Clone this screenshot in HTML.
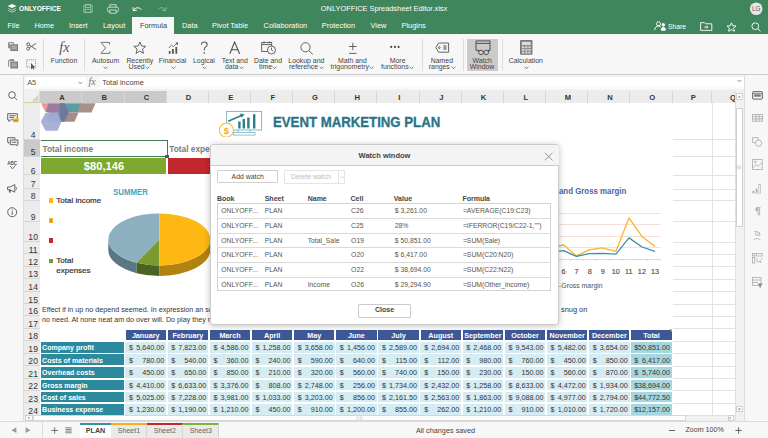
<!DOCTYPE html><html><head><meta charset="utf-8"><style>
html,body{margin:0;padding:0;width:768px;height:438px;overflow:hidden;background:#fff;font-family:"Liberation Sans", sans-serif;}
div{box-sizing:border-box;}
</style></head><body><div style="position:absolute;left:0px;top:0px;width:768px;height:34px;background:#40865c"></div>
<svg style="position:absolute;left:7px;top:3px;" width="10" height="11" viewBox="0 0 10 11"><path d="M5.1 0.9 L9.5 3 L5.1 5.1 L0.7 3 Z" fill="#fff"/>
<g fill="none" stroke="#fff" stroke-width="0.8" stroke-opacity="0.75"><path d="M1.3 5.4 L5.1 7.2 L8.9 5.4"/><path d="M1.3 7.4 L5.1 9.2 L8.9 7.4"/></g></svg>
<div style="position:absolute;left:19px;top:5.5px;font-size:6.6px;line-height:6.6px;color:#ffffff;font-weight:bold;white-space:pre;">ONLYOFFICE</div>
<svg style="position:absolute;left:83px;top:4px;" width="10" height="9" viewBox="0 0 10 9"><g fill="none" stroke="#a9cdb5" stroke-width="0.8"><rect x="0.8" y="0.8" width="8.4" height="7.6" rx="0.8"/><rect x="2.6" y="0.8" width="4.8" height="2.6"/><rect x="2.2" y="5.2" width="5.6" height="3.2"/></g></svg>
<svg style="position:absolute;left:107px;top:3.5px;" width="12" height="10" viewBox="0 0 12 10"><g fill="none" stroke="#e8f0ea" stroke-width="0.75"><path d="M2.9 3.2 V0.7 H9.1 V3.2"/><rect x="0.6" y="3.2" width="10.8" height="4.6" rx="1.2"/><rect x="2.9" y="6" width="6.2" height="3.2" fill="#40865c"/></g></svg>
<svg style="position:absolute;left:132px;top:6px;" width="11" height="6" viewBox="0 0 11 6"><g fill="none" stroke="#fff" stroke-width="1"><path d="M1.5 4.5 C3 1.2 7 1 9.5 3.5"/><path d="M0.8 1.2 L1.5 4.8 L4.8 4.2"/></g></svg>
<svg style="position:absolute;left:158px;top:6px;" width="9" height="6" viewBox="0 0 9 6"><g fill="none" stroke="#8fbba0" stroke-width="1"><path d="M7.5 4.5 C6 1.2 2.5 1 0.5 3"/><path d="M8.2 1.2 L7.5 4.8 L4.2 4.2"/></g></svg>
<div style="position:absolute;left:284px;width:200px;text-align:center;top:4.5px;font-size:7.4px;line-height:7.4px;color:#ffffff;font-weight:normal;white-space:pre;">ONLYOFFICE Spreadsheet Editor.xlsx</div>
<div style="position:absolute;left:132px;top:17px;width:42px;height:17px;background:#f7f7f7"></div>
<div style="position:absolute;left:7.6px;top:22px;font-size:7.4px;line-height:7.4px;color:#ffffff;font-weight:normal;white-space:pre;">File</div>
<div style="position:absolute;left:34.4px;top:22px;font-size:7.4px;line-height:7.4px;color:#ffffff;font-weight:normal;white-space:pre;">Home</div>
<div style="position:absolute;left:69px;top:22px;font-size:7.4px;line-height:7.4px;color:#ffffff;font-weight:normal;white-space:pre;">Insert</div>
<div style="position:absolute;left:103px;top:22px;font-size:7.4px;line-height:7.4px;color:#ffffff;font-weight:normal;white-space:pre;">Layout</div>
<div style="position:absolute;left:182px;top:22px;font-size:7.4px;line-height:7.4px;color:#ffffff;font-weight:normal;white-space:pre;">Data</div>
<div style="position:absolute;left:212px;top:22px;font-size:7.4px;line-height:7.4px;color:#ffffff;font-weight:normal;white-space:pre;">Pivot Table</div>
<div style="position:absolute;left:263.6px;top:22px;font-size:7.4px;line-height:7.4px;color:#ffffff;font-weight:normal;white-space:pre;">Collaboration</div>
<div style="position:absolute;left:321.8px;top:22px;font-size:7.4px;line-height:7.4px;color:#ffffff;font-weight:normal;white-space:pre;">Protection</div>
<div style="position:absolute;left:370.5px;top:22px;font-size:7.4px;line-height:7.4px;color:#ffffff;font-weight:normal;white-space:pre;">View</div>
<div style="position:absolute;left:401.5px;top:22px;font-size:7.4px;line-height:7.4px;color:#ffffff;font-weight:normal;white-space:pre;">Plugins</div>
<div style="position:absolute;left:140px;top:22px;font-size:7.4px;line-height:7.4px;color:#444;font-weight:normal;white-space:pre;">Formula</div>
<svg style="position:absolute;left:749px;top:2px;" width="14" height="14" viewBox="0 0 14 14"><circle cx="7.2" cy="6.8" r="6.3" fill="#e6e6e6"/><text x="7.2" y="9.2" font-size="6.4" text-anchor="middle" fill="#5a5a5a" font-family="Liberation Sans">LG</text></svg>
<svg style="position:absolute;left:654px;top:21px;" width="13" height="10" viewBox="0 0 13 10"><g fill="none" stroke="#fff" stroke-width="0.9"><circle cx="4.5" cy="2.8" r="2"/><path d="M0.7 9.2 C0.7 6.2 2.5 5.2 4.5 5.2 C5.5 5.2 6.3 5.5 7 6"/><circle cx="9.3" cy="3.8" r="1.3" fill="#fff"/><path d="M7.3 9.2 C7.3 7.3 8 6.3 9.3 6.3 C10.6 6.3 11.3 7.3 11.3 9.2 Z" fill="#fff"/></g></svg>
<div style="position:absolute;left:668px;top:23.7px;font-size:6.8px;line-height:6.8px;color:#ffffff;font-weight:normal;white-space:pre;">Share</div>
<svg style="position:absolute;left:700px;top:22px;" width="13" height="9" viewBox="0 0 13 9"><g fill="none" stroke="#fff" stroke-width="0.9"><path d="M0.6 0.6 H4.6 L5.6 1.8 H11.8 V8.4 H0.6 Z"/><path d="M4.2 5.1 H7.8 M6.4 3.7 L7.8 5.1 L6.4 6.5"/></g></svg>
<svg style="position:absolute;left:726px;top:21.5px;" width="11" height="10" viewBox="0 0 11 10"><path d="M5.5 0.8 L6.8 3.8 L10 4 L7.6 6.1 L8.4 9.3 L5.5 7.6 L2.6 9.3 L3.4 6.1 L1 4 L4.2 3.8 Z" fill="none" stroke="#fff" stroke-width="0.9" stroke-linejoin="round"/></svg>
<svg style="position:absolute;left:750.5px;top:21.5px;" width="11" height="10" viewBox="0 0 11 10"><g fill="none" stroke="#fff" stroke-width="0.9"><circle cx="4.3" cy="4.2" r="3.4"/><path d="M6.8 6.7 L9.6 9.4"/></g></svg>
<div style="position:absolute;left:0px;top:34px;width:768px;height:41px;background:#f7f7f7;border-bottom:1px solid #cbcbcb"></div>
<div style="position:absolute;left:467px;top:39.2px;width:30.5px;height:31.8px;background:#cbcbcb"></div>
<svg style="position:absolute;left:7.5px;top:42px;" width="11" height="10" viewBox="0 0 11 10"><g fill="none" stroke="#6a6a6a" stroke-width="0.8"><path d="M0.6 6.2 V0.6 H5.4 V2.4"/><path d="M1.6 6.4 V1.6"/><rect x="2.8" y="2.8" width="6.8" height="5.8" fill="#9a9a9a"/></g><g stroke="#c8c8c8" stroke-width="0.5"><path d="M4 4.6 H8.4 M4 6.2 H8.4"/></g></svg>
<svg style="position:absolute;left:7.5px;top:59px;" width="11" height="10" viewBox="0 0 11 10"><g fill="none" stroke="#6a6a6a" stroke-width="0.8"><path d="M0.6 7.6 V1.6 H6.2 M1.8 0.6 H5.6 V1.6"/><rect x="2.8" y="3" width="6.8" height="6" fill="#9a9a9a"/></g><g stroke="#c8c8c8" stroke-width="0.5"><path d="M4 5 H8.4 M4 6.6 H8.4"/></g></svg>
<svg style="position:absolute;left:25.5px;top:42px;" width="11" height="9" viewBox="0 0 11 9"><g fill="none" stroke="#555" stroke-width="0.9"><circle cx="2.2" cy="2.3" r="1.5"/><circle cx="2.2" cy="6.6" r="1.5"/><path d="M3.5 3.2 L10.2 7.6 M3.5 5.7 L10.2 1.3"/></g></svg>
<svg style="position:absolute;left:25.5px;top:58.5px;" width="11" height="11" viewBox="0 0 11 11"><g fill="none" stroke="#666" stroke-width="0.8" stroke-dasharray="1,1"><rect x="0.8" y="0.8" width="8.8" height="7.4"/></g><path d="M5 4 L5 10.4 L6.4 9 L7.6 10.8 L8.4 10.3 L7.3 8.6 L9.2 8.4 Z" fill="#555"/></svg>
<div style="position:absolute;left:43.2px;top:39px;width:0.9px;height:31.5px;background:#dcdcdc"></div>
<div style="position:absolute;left:59.3px;top:39.8px;font-family:'Liberation Serif',serif;font-style:italic;font-size:14.2px;line-height:14px;color:#555">fx</div>
<div style="position:absolute;left:50.8px;top:57.58925px;font-size:6.9px;line-height:6.9px;color:#444;font-weight:normal;white-space:pre;">Function</div>
<div style="position:absolute;left:84.19999999999999px;top:39px;width:0.9px;height:31.5px;background:#dcdcdc"></div>
<svg style="position:absolute;left:100px;top:41px;" width="11" height="13.5" viewBox="0 0 11 13.5"><path d="M9.6 3.4 L9.6 1.4 H1 L5.6 7 L1 12.4 H9.8 L9.8 10.4" fill="none" stroke="#666" stroke-width="0.9" stroke-linejoin="miter"/></svg>
<div style="position:absolute;left:92px;top:57.58925px;font-size:6.9px;line-height:6.9px;color:#444;font-weight:normal;white-space:pre;">Autosum</div>
<svg style="position:absolute;left:103.0px;top:65.7px;" width="5" height="3.5" viewBox="0 0 5 3.5"><path d="M0.6 0.8 L2.5 2.6 L4.4 0.8" fill="none" stroke="#555" stroke-width="0.8"/></svg>
<svg style="position:absolute;left:132.5px;top:41px;" width="14" height="13.5" viewBox="0 0 14 13.5"><path d="M6.8 1 L8.5 5 L12.8 5.3 L9.5 8.1 L10.5 12.4 L6.8 10.1 L3.1 12.4 L4.1 8.1 L0.8 5.3 L5.1 5 Z" fill="none" stroke="#555" stroke-width="0.9" stroke-linejoin="round"/></svg>
<div style="position:absolute;left:126.4px;top:57.58925px;font-size:6.9px;line-height:6.9px;color:#444;font-weight:normal;white-space:pre;">Recently</div>
<div style="position:absolute;left:128.5px;top:64.38925px;font-size:6.9px;line-height:6.9px;color:#444;font-weight:normal;white-space:pre;">Used</div>
<svg style="position:absolute;left:145.1px;top:65.7px;" width="5" height="3.5" viewBox="0 0 5 3.5"><path d="M0.6 0.8 L2.5 2.6 L4.4 0.8" fill="none" stroke="#555" stroke-width="0.8"/></svg>
<svg style="position:absolute;left:167.5px;top:41.5px;" width="11" height="12.5" viewBox="0 0 11 12.5"><g fill="#555"><rect x="0.8" y="9" width="1.8" height="2.8"/><rect x="4" y="7" width="1.8" height="4.8"/><rect x="7.4" y="5" width="1.8" height="6.8"/></g><path d="M0.8 6 L3.6 3.2 L5.4 4.6 L9.2 1" fill="none" stroke="#555" stroke-width="0.8"/><path d="M7.3 0.6 L10 0.6 L10 3.2 Z" fill="#555"/></svg>
<div style="position:absolute;left:158.7px;top:57.58925px;font-size:6.9px;line-height:6.9px;color:#444;font-weight:normal;white-space:pre;">Financial</div>
<svg style="position:absolute;left:171.1px;top:65.7px;" width="5" height="3.5" viewBox="0 0 5 3.5"><path d="M0.6 0.8 L2.5 2.6 L4.4 0.8" fill="none" stroke="#555" stroke-width="0.8"/></svg>
<svg style="position:absolute;left:199.5px;top:41px;" width="9" height="14" viewBox="0 0 9 14"><path d="M1.3 3.8 C1.3 1.9 2.6 1 4.2 1 C5.9 1 7.2 2.1 7.2 3.6 C7.2 5.3 5.9 5.8 4.9 6.7 C4.3 7.3 4.2 7.9 4.2 9.4" fill="none" stroke="#5a5a5a" stroke-width="1.05"/><rect x="3.5" y="11.3" width="1.45" height="1.45" fill="#5a5a5a"/></svg>
<div style="position:absolute;left:193px;top:57.58925px;font-size:6.9px;line-height:6.9px;color:#444;font-weight:normal;white-space:pre;">Logical</div>
<svg style="position:absolute;left:201.5px;top:65.7px;" width="5" height="3.5" viewBox="0 0 5 3.5"><path d="M0.6 0.8 L2.5 2.6 L4.4 0.8" fill="none" stroke="#555" stroke-width="0.8"/></svg>
<svg style="position:absolute;left:229px;top:41px;" width="12" height="14" viewBox="0 0 12 14"><path d="M0.8 12.8 L5.6 1 L10.6 12.8 M2.4 8.8 H9" fill="none" stroke="#4a4a4a" stroke-width="1.05"/></svg>
<div style="position:absolute;left:221.7px;top:57.58925px;font-size:6.9px;line-height:6.9px;color:#444;font-weight:normal;white-space:pre;">Text and</div>
<div style="position:absolute;left:225px;top:64.38925px;font-size:6.9px;line-height:6.9px;color:#444;font-weight:normal;white-space:pre;">data</div>
<svg style="position:absolute;left:238.7px;top:65.7px;" width="5" height="3.5" viewBox="0 0 5 3.5"><path d="M0.6 0.8 L2.5 2.6 L4.4 0.8" fill="none" stroke="#555" stroke-width="0.8"/></svg>
<svg style="position:absolute;left:260.5px;top:41px;" width="15.5" height="14" viewBox="0 0 15.5 14"><g fill="none" stroke="#555" stroke-width="0.9"><rect x="0.7" y="1.6" width="10" height="8.8"/><path d="M0.7 3.6 H10.7"/><path d="M3 0.4 V2.4 M8.3 0.4 V2.4"/><circle cx="10.5" cy="9" r="4" fill="#f7f7f7"/><path d="M10.5 6.6 V9 L12.2 10.3"/></g></svg>
<div style="position:absolute;left:254px;top:57.58925px;font-size:6.9px;line-height:6.9px;color:#444;font-weight:normal;white-space:pre;">Date and</div>
<div style="position:absolute;left:259px;top:64.38925px;font-size:6.9px;line-height:6.9px;color:#444;font-weight:normal;white-space:pre;">time</div>
<svg style="position:absolute;left:272.1px;top:65.7px;" width="5" height="3.5" viewBox="0 0 5 3.5"><path d="M0.6 0.8 L2.5 2.6 L4.4 0.8" fill="none" stroke="#555" stroke-width="0.8"/></svg>
<svg style="position:absolute;left:299.5px;top:41.5px;" width="14" height="13" viewBox="0 0 14 13"><g fill="none" stroke="#555" stroke-width="0.9"><circle cx="5.5" cy="5.3" r="4.6"/><path d="M8.8 8.6 L12.8 12.4"/></g></svg>
<div style="position:absolute;left:288.3px;top:57.58925px;font-size:6.9px;line-height:6.9px;color:#444;font-weight:normal;white-space:pre;">Lookup and</div>
<div style="position:absolute;left:289px;top:64.38925px;font-size:6.9px;line-height:6.9px;color:#444;font-weight:normal;white-space:pre;">reference</div>
<svg style="position:absolute;left:318.5px;top:65.7px;" width="5" height="3.5" viewBox="0 0 5 3.5"><path d="M0.6 0.8 L2.5 2.6 L4.4 0.8" fill="none" stroke="#555" stroke-width="0.8"/></svg>
<svg style="position:absolute;left:347.5px;top:41.5px;" width="10" height="13" viewBox="0 0 10 13"><g stroke="#555" stroke-width="0.9"><path d="M4.8 0.8 V8.2 M1 4.5 H8.6 M1 11.4 H8.6"/></g></svg>
<div style="position:absolute;left:338px;top:57.58925px;font-size:6.9px;line-height:6.9px;color:#444;font-weight:normal;white-space:pre;">Math and</div>
<div style="position:absolute;left:330.6px;top:64.38925px;font-size:6.9px;line-height:6.9px;color:#444;font-weight:normal;white-space:pre;">trigonometry</div>
<svg style="position:absolute;left:369.1px;top:65.7px;" width="5" height="3.5" viewBox="0 0 5 3.5"><path d="M0.6 0.8 L2.5 2.6 L4.4 0.8" fill="none" stroke="#555" stroke-width="0.8"/></svg>
<svg style="position:absolute;left:389px;top:45px;" width="12" height="3" viewBox="0 0 12 3"><g fill="#444"><circle cx="2.2" cy="1.9" r="1.05"/><circle cx="5.9" cy="1.9" r="1.05"/><circle cx="9.6" cy="1.9" r="1.05"/></g></svg>
<div style="position:absolute;left:389.8px;top:57.58925px;font-size:6.9px;line-height:6.9px;color:#444;font-weight:normal;white-space:pre;">More</div>
<div style="position:absolute;left:381px;top:64.38925px;font-size:6.9px;line-height:6.9px;color:#444;font-weight:normal;white-space:pre;">functions</div>
<svg style="position:absolute;left:409.0px;top:65.7px;" width="5" height="3.5" viewBox="0 0 5 3.5"><path d="M0.6 0.8 L2.5 2.6 L4.4 0.8" fill="none" stroke="#555" stroke-width="0.8"/></svg>
<div style="position:absolute;left:421.5px;top:39px;width:0.9px;height:31.5px;background:#dcdcdc"></div>
<svg style="position:absolute;left:435px;top:42px;" width="15" height="11.5" viewBox="0 0 15 11.5"><g fill="none" stroke="#555" stroke-width="0.9"><path d="M3.6 1 H13.6 V10.2 H3.6 L0.8 5.6 Z"/><circle cx="4.3" cy="5.6" r="0.9"/></g><g fill="#999"><rect x="8.4" y="3.2" width="3.2" height="4.8"/></g></svg>
<div style="position:absolute;left:430.8px;top:57.58925px;font-size:6.9px;line-height:6.9px;color:#444;font-weight:normal;white-space:pre;">Named</div>
<div style="position:absolute;left:428.75px;top:64.38925px;font-size:6.9px;line-height:6.9px;color:#444;font-weight:normal;white-space:pre;">ranges</div>
<svg style="position:absolute;left:450.5px;top:65.7px;" width="5" height="3.5" viewBox="0 0 5 3.5"><path d="M0.6 0.8 L2.5 2.6 L4.4 0.8" fill="none" stroke="#555" stroke-width="0.8"/></svg>
<div style="position:absolute;left:462.6px;top:39px;width:0.9px;height:31.5px;background:#dcdcdc"></div>
<svg style="position:absolute;left:474.5px;top:40px;" width="16" height="17" viewBox="0 0 16 17"><g fill="none" stroke="#444" stroke-width="0.9"><path d="M3.2 10.4 H1 V0.9 H15 V10.4 H13.2"/><path d="M1 3.4 H15"/><circle cx="6" cy="12.4" r="2.3"/><circle cx="11.2" cy="12.4" r="2.3"/><path d="M8.2 12 Q8.6 11.3 9 12 M3.8 12 L3.4 9.8 M13.4 12 L13.8 9.8"/></g></svg>
<div style="position:absolute;left:472.5px;top:57.58925px;font-size:6.9px;line-height:6.9px;color:#444;font-weight:normal;white-space:pre;">Watch</div>
<div style="position:absolute;left:469.8px;top:64.38925px;font-size:6.9px;line-height:6.9px;color:#444;font-weight:normal;white-space:pre;">Window</div>
<div style="position:absolute;left:501.6px;top:39px;width:0.9px;height:31.5px;background:#dcdcdc"></div>
<svg style="position:absolute;left:520px;top:40px;" width="13" height="15" viewBox="0 0 13 15"><rect x="0.6" y="0.6" width="11.4" height="13.6" fill="#8c8c8c" stroke="#666" stroke-width="0.8"/><rect x="2" y="2" width="8.6" height="3" fill="#ddd"/><g fill="#ddd"><rect x="2" y="6.4" width="2.2" height="1.7"/><rect x="5.2" y="6.4" width="2.2" height="1.7"/><rect x="8.4" y="6.4" width="2.2" height="1.7"/><rect x="2" y="9.1" width="2.2" height="1.7"/><rect x="5.2" y="9.1" width="2.2" height="1.7"/><rect x="8.4" y="9.1" width="2.2" height="1.7"/><rect x="2" y="11.8" width="2.2" height="1.6"/><rect x="5.2" y="11.8" width="2.2" height="1.6"/><rect x="8.4" y="11.8" width="2.2" height="1.6"/></g></svg>
<div style="position:absolute;left:508.75px;top:57.58925px;font-size:6.9px;line-height:6.9px;color:#444;font-weight:normal;white-space:pre;">Calculation</div>
<svg style="position:absolute;left:524.0px;top:65.7px;" width="5" height="3.5" viewBox="0 0 5 3.5"><path d="M0.6 0.8 L2.5 2.6 L4.4 0.8" fill="none" stroke="#555" stroke-width="0.8"/></svg>
<div style="position:absolute;left:0px;top:75px;width:24px;height:346.5px;background:#f7f7f7;border-right:1px solid #dcdcdc"></div>
<div style="position:absolute;left:24px;top:75px;width:721px;height:16px;background:#f1f1f1"></div>
<div style="position:absolute;left:25px;top:76.6px;width:60.8px;height:10.8px;background:#fff"></div>
<div style="position:absolute;left:27.2px;top:78.73049999999999px;font-size:7.4px;line-height:7.4px;color:#555;font-weight:normal;white-space:pre;">A5</div>
<svg style="position:absolute;left:77.5px;top:80.5px;" width="5" height="4" viewBox="0 0 5 4"><path d="M0.6 1 L2.4 2.8 L4.2 1" fill="none" stroke="#666" stroke-width="0.8"/></svg>
<div style="position:absolute;left:86.4px;top:76.6px;width:12.6px;height:10.8px;background:#f7f7f7"></div>
<div style="position:absolute;left:88.6px;top:77px;font-family:'Liberation Serif',serif;font-style:italic;font-size:10px;line-height:10px;color:#777">fx</div>
<div style="position:absolute;left:99.6px;top:76.6px;width:645px;height:10.8px;background:#fff"></div>
<div style="position:absolute;left:102.3px;top:78.73049999999999px;font-size:7.4px;line-height:7.4px;color:#444;font-weight:normal;white-space:pre;">Total income</div>
<svg style="position:absolute;left:736.5px;top:79px;" width="5" height="4" viewBox="0 0 5 4"><path d="M0.6 1 L2.4 2.8 L4.2 1" fill="none" stroke="#666" stroke-width="0.8"/></svg>
<div style="position:absolute;left:24px;top:87.4px;width:721px;height:1.5px;background:#fafafa"></div>
<div style="position:absolute;left:24px;top:91.2px;width:721px;height:11.5px;background:#ececec"></div>
<div style="position:absolute;left:24px;top:91.2px;width:16.3px;height:11.5px;background:#f1f1f1;border-right:1px solid #d8d8d8"></div>
<svg style="position:absolute;left:31px;top:94px;" width="8" height="8" viewBox="0 0 8 8"><path d="M7.4 0.6 L7.4 7.4 L0.6 7.4 Z" fill="#d2d2d2"/></svg>
<div style="position:absolute;left:40.3px;top:91.2px;width:42.14999999999999px;height:11.5px;background:#cacaca;border-right:1px solid #d6d6d6"></div>
<div style="position:absolute;left:-37.925000000000004px;width:200px;text-align:center;top:93.707px;font-size:7.6px;line-height:7.6px;color:#363636;font-weight:bold;white-space:pre;">A</div>
<div style="position:absolute;left:82.44999999999999px;top:91.2px;width:42.150000000000006px;height:11.5px;background:#cacaca;border-right:1px solid #d6d6d6"></div>
<div style="position:absolute;left:4.224999999999994px;width:200px;text-align:center;top:93.707px;font-size:7.6px;line-height:7.6px;color:#363636;font-weight:bold;white-space:pre;">B</div>
<div style="position:absolute;left:124.6px;top:91.2px;width:42.150000000000006px;height:11.5px;background:#cacaca;border-right:1px solid #d6d6d6"></div>
<div style="position:absolute;left:46.375px;width:200px;text-align:center;top:93.707px;font-size:7.6px;line-height:7.6px;color:#363636;font-weight:bold;white-space:pre;">C</div>
<div style="position:absolute;left:166.75px;top:91.2px;width:42.14999999999998px;height:11.5px;background:#ececec;border-right:1px solid #d6d6d6"></div>
<div style="position:absolute;left:88.52499999999998px;width:200px;text-align:center;top:93.707px;font-size:7.6px;line-height:7.6px;color:#363636;font-weight:bold;white-space:pre;">D</div>
<div style="position:absolute;left:208.89999999999998px;top:91.2px;width:42.150000000000034px;height:11.5px;background:#ececec;border-right:1px solid #d6d6d6"></div>
<div style="position:absolute;left:130.67499999999998px;width:200px;text-align:center;top:93.707px;font-size:7.6px;line-height:7.6px;color:#363636;font-weight:bold;white-space:pre;">E</div>
<div style="position:absolute;left:251.05px;top:91.2px;width:42.14999999999998px;height:11.5px;background:#ececec;border-right:1px solid #d6d6d6"></div>
<div style="position:absolute;left:172.825px;width:200px;text-align:center;top:93.707px;font-size:7.6px;line-height:7.6px;color:#363636;font-weight:bold;white-space:pre;">F</div>
<div style="position:absolute;left:293.2px;top:91.2px;width:42.150000000000034px;height:11.5px;background:#ececec;border-right:1px solid #d6d6d6"></div>
<div style="position:absolute;left:214.97499999999997px;width:200px;text-align:center;top:93.707px;font-size:7.6px;line-height:7.6px;color:#363636;font-weight:bold;white-space:pre;">G</div>
<div style="position:absolute;left:335.35px;top:91.2px;width:42.14999999999998px;height:11.5px;background:#ececec;border-right:1px solid #d6d6d6"></div>
<div style="position:absolute;left:257.125px;width:200px;text-align:center;top:93.707px;font-size:7.6px;line-height:7.6px;color:#363636;font-weight:bold;white-space:pre;">H</div>
<div style="position:absolute;left:377.5px;top:91.2px;width:42.14999999999998px;height:11.5px;background:#ececec;border-right:1px solid #d6d6d6"></div>
<div style="position:absolute;left:299.275px;width:200px;text-align:center;top:93.707px;font-size:7.6px;line-height:7.6px;color:#363636;font-weight:bold;white-space:pre;">I</div>
<div style="position:absolute;left:419.65px;top:91.2px;width:42.150000000000034px;height:11.5px;background:#ececec;border-right:1px solid #d6d6d6"></div>
<div style="position:absolute;left:341.425px;width:200px;text-align:center;top:93.707px;font-size:7.6px;line-height:7.6px;color:#363636;font-weight:bold;white-space:pre;">J</div>
<div style="position:absolute;left:461.8px;top:91.2px;width:42.14999999999998px;height:11.5px;background:#ececec;border-right:1px solid #d6d6d6"></div>
<div style="position:absolute;left:383.575px;width:200px;text-align:center;top:93.707px;font-size:7.6px;line-height:7.6px;color:#363636;font-weight:bold;white-space:pre;">K</div>
<div style="position:absolute;left:503.95px;top:91.2px;width:42.14999999999992px;height:11.5px;background:#ececec;border-right:1px solid #d6d6d6"></div>
<div style="position:absolute;left:425.725px;width:200px;text-align:center;top:93.707px;font-size:7.6px;line-height:7.6px;color:#363636;font-weight:bold;white-space:pre;">L</div>
<div style="position:absolute;left:546.0999999999999px;top:91.2px;width:42.14999999999998px;height:11.5px;background:#ececec;border-right:1px solid #d6d6d6"></div>
<div style="position:absolute;left:467.875px;width:200px;text-align:center;top:93.707px;font-size:7.6px;line-height:7.6px;color:#363636;font-weight:bold;white-space:pre;">M</div>
<div style="position:absolute;left:588.2499999999999px;top:91.2px;width:42.15000000000009px;height:11.5px;background:#ececec;border-right:1px solid #d6d6d6"></div>
<div style="position:absolute;left:510.025px;width:200px;text-align:center;top:93.707px;font-size:7.6px;line-height:7.6px;color:#363636;font-weight:bold;white-space:pre;">N</div>
<div style="position:absolute;left:630.4px;top:91.2px;width:42.30000000000007px;height:11.5px;background:#ececec;border-right:1px solid #d6d6d6"></div>
<div style="position:absolute;left:552.25px;width:200px;text-align:center;top:93.707px;font-size:7.6px;line-height:7.6px;color:#363636;font-weight:bold;white-space:pre;">O</div>
<div style="position:absolute;left:672.7px;top:91.2px;width:39.59999999999991px;height:11.5px;background:#ececec;border-right:1px solid #d6d6d6"></div>
<div style="position:absolute;left:593.2px;width:200px;text-align:center;top:93.707px;font-size:7.6px;line-height:7.6px;color:#363636;font-weight:bold;white-space:pre;">P</div>
<div style="position:absolute;left:712.3px;top:91.2px;width:47.700000000000045px;height:11.5px;background:#ececec;border-right:1px solid #d6d6d6"></div>
<div style="position:absolute;left:633px;width:200px;text-align:center;top:93.707px;font-size:7.6px;line-height:7.6px;color:#363636;font-weight:bold;white-space:pre;">Q</div>
<div style="position:absolute;left:40.3px;top:102.7px;width:695px;height:313px;background:#fff"></div>
<div style="position:absolute;left:24px;top:102.7px;width:16.3px;height:313px;background:#ececec"></div>
<div style="position:absolute;left:24px;top:102.7px;width:16.3px;height:37.2px;background:#ececec;border-bottom:1px solid #d6d6d6"></div>
<div style="position:absolute;left:25px;width:16.3px;text-align:center;top:131.15869999999998px;font-size:8.6px;line-height:8.2px;color:#333;font-weight:normal">4</div>
<div style="position:absolute;left:24px;top:139.9px;width:16.3px;height:16.799999999999983px;background:#cacaca;border-bottom:1px solid #d6d6d6"></div>
<div style="position:absolute;left:25px;width:16.3px;text-align:center;top:147.95869999999996px;font-size:8.6px;line-height:8.2px;color:#333;font-weight:normal">5</div>
<div style="position:absolute;left:24px;top:156.7px;width:16.3px;height:18.80000000000001px;background:#ececec;border-bottom:1px solid #d6d6d6"></div>
<div style="position:absolute;left:25px;width:16.3px;text-align:center;top:166.75869999999998px;font-size:8.6px;line-height:8.2px;color:#333;font-weight:normal">6</div>
<div style="position:absolute;left:24px;top:175.5px;width:16.3px;height:13.599999999999994px;background:#ececec;border-bottom:1px solid #d6d6d6"></div>
<div style="position:absolute;left:25px;width:16.3px;text-align:center;top:180.35869999999997px;font-size:8.6px;line-height:8.2px;color:#333;font-weight:normal">7</div>
<div style="position:absolute;left:24px;top:189.1px;width:16.3px;height:11.800000000000011px;background:#ececec;border-bottom:1px solid #d6d6d6"></div>
<div style="position:absolute;left:25px;width:16.3px;text-align:center;top:192.15869999999998px;font-size:8.6px;line-height:8.2px;color:#333;font-weight:normal">8</div>
<div style="position:absolute;left:24px;top:200.9px;width:16.3px;height:20.900000000000006px;background:#ececec;border-bottom:1px solid #d6d6d6"></div>
<div style="position:absolute;left:25px;width:16.3px;text-align:center;top:213.0587px;font-size:8.6px;line-height:8.2px;color:#333;font-weight:normal">9</div>
<div style="position:absolute;left:24px;top:221.8px;width:16.3px;height:20.399999999999977px;background:#ececec;border-bottom:1px solid #d6d6d6"></div>
<div style="position:absolute;left:25px;width:16.3px;text-align:center;top:233.45869999999996px;font-size:8.6px;line-height:8.2px;color:#333;font-weight:normal">10</div>
<div style="position:absolute;left:24px;top:242.2px;width:16.3px;height:12.300000000000011px;background:#ececec;border-bottom:1px solid #d6d6d6"></div>
<div style="position:absolute;left:25px;width:16.3px;text-align:center;top:245.75869999999998px;font-size:8.6px;line-height:8.2px;color:#333;font-weight:normal">11</div>
<div style="position:absolute;left:24px;top:254.5px;width:16.3px;height:12.199999999999989px;background:#ececec;border-bottom:1px solid #d6d6d6"></div>
<div style="position:absolute;left:25px;width:16.3px;text-align:center;top:257.95869999999996px;font-size:8.6px;line-height:8.2px;color:#333;font-weight:normal">12</div>
<div style="position:absolute;left:24px;top:266.7px;width:16.3px;height:12.400000000000034px;background:#ececec;border-bottom:1px solid #d6d6d6"></div>
<div style="position:absolute;left:25px;width:16.3px;text-align:center;top:270.3587px;font-size:8.6px;line-height:8.2px;color:#333;font-weight:normal">13</div>
<div style="position:absolute;left:24px;top:279.1px;width:16.3px;height:12.599999999999966px;background:#ececec;border-bottom:1px solid #d6d6d6"></div>
<div style="position:absolute;left:25px;width:16.3px;text-align:center;top:282.95869999999996px;font-size:8.6px;line-height:8.2px;color:#333;font-weight:normal">14</div>
<div style="position:absolute;left:24px;top:291.7px;width:16.3px;height:12.600000000000023px;background:#ececec;border-bottom:1px solid #d6d6d6"></div>
<div style="position:absolute;left:25px;width:16.3px;text-align:center;top:295.5587px;font-size:8.6px;line-height:8.2px;color:#333;font-weight:normal">15</div>
<div style="position:absolute;left:24px;top:304.3px;width:16.3px;height:11.800000000000011px;background:#ececec;border-bottom:1px solid #d6d6d6"></div>
<div style="position:absolute;left:25px;width:16.3px;text-align:center;top:307.3587px;font-size:8.6px;line-height:8.2px;color:#333;font-weight:normal">16</div>
<div style="position:absolute;left:24px;top:316.1px;width:16.3px;height:12.699999999999989px;background:#ececec;border-bottom:1px solid #d6d6d6"></div>
<div style="position:absolute;left:25px;width:16.3px;text-align:center;top:320.0587px;font-size:8.6px;line-height:8.2px;color:#333;font-weight:normal">17</div>
<div style="position:absolute;left:24px;top:328.8px;width:16.3px;height:12.399999999999977px;background:#ececec;border-bottom:1px solid #d6d6d6"></div>
<div style="position:absolute;left:25px;width:16.3px;text-align:center;top:332.45869999999996px;font-size:8.6px;line-height:8.2px;color:#333;font-weight:normal">18</div>
<div style="position:absolute;left:24px;top:341.2px;width:16.3px;height:12.400000000000034px;background:#ececec;border-bottom:1px solid #d6d6d6"></div>
<div style="position:absolute;left:25px;width:16.3px;text-align:center;top:344.8587px;font-size:8.6px;line-height:8.2px;color:#333;font-weight:normal">19</div>
<div style="position:absolute;left:24px;top:353.6px;width:16.3px;height:12.599999999999966px;background:#ececec;border-bottom:1px solid #d6d6d6"></div>
<div style="position:absolute;left:25px;width:16.3px;text-align:center;top:357.45869999999996px;font-size:8.6px;line-height:8.2px;color:#333;font-weight:normal">20</div>
<div style="position:absolute;left:24px;top:366.2px;width:16.3px;height:12.5px;background:#ececec;border-bottom:1px solid #d6d6d6"></div>
<div style="position:absolute;left:25px;width:16.3px;text-align:center;top:369.95869999999996px;font-size:8.6px;line-height:8.2px;color:#333;font-weight:normal">21</div>
<div style="position:absolute;left:24px;top:378.7px;width:16.3px;height:12.100000000000023px;background:#ececec;border-bottom:1px solid #d6d6d6"></div>
<div style="position:absolute;left:25px;width:16.3px;text-align:center;top:382.0587px;font-size:8.6px;line-height:8.2px;color:#333;font-weight:normal">22</div>
<div style="position:absolute;left:24px;top:390.8px;width:16.3px;height:12.5px;background:#ececec;border-bottom:1px solid #d6d6d6"></div>
<div style="position:absolute;left:25px;width:16.3px;text-align:center;top:394.5587px;font-size:8.6px;line-height:8.2px;color:#333;font-weight:normal">23</div>
<div style="position:absolute;left:24px;top:403.3px;width:16.3px;height:12.399999999999977px;background:#ececec;border-bottom:1px solid #d6d6d6"></div>
<div style="position:absolute;left:25px;width:16.3px;text-align:center;top:406.95869999999996px;font-size:8.6px;line-height:8.2px;color:#333;font-weight:normal">24</div>
<div style="position:absolute;left:24px;top:102.4px;width:16.3px;height:1px;background:#c8d4a0"></div>
<div style="position:absolute;left:672.7px;top:139.4px;width:62px;height:1px;background:#e2e2e2"></div>
<div style="position:absolute;left:672.7px;top:156.2px;width:62px;height:1px;background:#e2e2e2"></div>
<div style="position:absolute;left:672.7px;top:175.0px;width:62px;height:1px;background:#e2e2e2"></div>
<div style="position:absolute;left:672.7px;top:188.6px;width:62px;height:1px;background:#e2e2e2"></div>
<div style="position:absolute;left:672.7px;top:200.4px;width:62px;height:1px;background:#e2e2e2"></div>
<div style="position:absolute;left:672.7px;top:221.3px;width:62px;height:1px;background:#e2e2e2"></div>
<div style="position:absolute;left:672.7px;top:241.7px;width:62px;height:1px;background:#e2e2e2"></div>
<div style="position:absolute;left:672.7px;top:254.0px;width:62px;height:1px;background:#e2e2e2"></div>
<div style="position:absolute;left:672.7px;top:266.2px;width:62px;height:1px;background:#e2e2e2"></div>
<div style="position:absolute;left:672.7px;top:278.6px;width:62px;height:1px;background:#e2e2e2"></div>
<div style="position:absolute;left:672.7px;top:291.2px;width:62px;height:1px;background:#e2e2e2"></div>
<div style="position:absolute;left:672.7px;top:303.8px;width:62px;height:1px;background:#e2e2e2"></div>
<div style="position:absolute;left:672.7px;top:315.6px;width:62px;height:1px;background:#e2e2e2"></div>
<div style="position:absolute;left:672.7px;top:328.3px;width:62px;height:1px;background:#e2e2e2"></div>
<div style="position:absolute;left:672.7px;top:340.7px;width:62px;height:1px;background:#e2e2e2"></div>
<div style="position:absolute;left:672.7px;top:353.1px;width:62px;height:1px;background:#e2e2e2"></div>
<div style="position:absolute;left:672.7px;top:365.7px;width:62px;height:1px;background:#e2e2e2"></div>
<div style="position:absolute;left:672.7px;top:378.2px;width:62px;height:1px;background:#e2e2e2"></div>
<div style="position:absolute;left:672.7px;top:390.3px;width:62px;height:1px;background:#e2e2e2"></div>
<div style="position:absolute;left:672.7px;top:402.8px;width:62px;height:1px;background:#e2e2e2"></div>
<div style="position:absolute;left:672.7px;top:415.2px;width:62px;height:1px;background:#e2e2e2"></div>
<div style="position:absolute;left:712px;top:102.7px;width:1px;height:313px;background:#e2e2e2"></div>
<svg style="position:absolute;left:40.3px;top:102.7px;" width="60" height="30" viewBox="0 0 60 30">
<polygon points="1,0.3 9.5,0.3 5.2,9" fill="#e9999a"/>
<polygon points="8.4,0.3 20.5,0.3 23.1,9.5 20.5,9.7 9.5,9.7 5.6,9" fill="#9c7b9f"/>
<polygon points="20.6,0.3 41.8,0.3 37.8,9.5 24.5,9.5" fill="#5c9ca3"/>
<polygon points="40.5,0.3 55.5,0.3 51.5,9.5 37.3,9.5" fill="#a99088"/>
<polygon points="9.2,9.5 22.8,9.5 23.8,18.8 9.8,18.8 6.8,14" fill="#7b87b8"/>
<polygon points="23,9.5 38.5,9.5 34.5,18.8 22.3,18.8" fill="#a98c89"/>
<polygon points="19.8,0.3 24.8,0.3 28.8,9.5 24.3,18.8 20,18.8" fill="#6c7a9e"/>
<polygon points="5.5,9.8 17.5,9.8 21.5,18.8 17.5,27.8 5.5,27.8 0.8,18.8" fill="#a1add1" fill-opacity="0.95"/>
</svg>
<svg style="position:absolute;left:218px;top:109px;" width="46" height="28" viewBox="0 0 46 28">
<rect x="8.6" y="2.4" width="35" height="18.6" fill="#fff" stroke="#76b7c6" stroke-width="0.95"/>
<path d="M20 21 L20 23.5 M32 21 L32 23.5" stroke="#76b7c6" stroke-width="0.9"/>
<rect x="15.5" y="23.5" width="21.5" height="2.6" fill="#fff" stroke="#76b7c6" stroke-width="0.8"/>
<g fill="#2f7c8d"><rect x="20.2" y="12.5" width="2.4" height="7"/><rect x="24.6" y="10" width="2.4" height="9.5"/><rect x="29.2" y="8.5" width="2.4" height="11"/><rect x="35" y="5.2" width="2.4" height="14.3"/></g>
<path d="M10.2 12.2 L24 6.2" stroke="#2f7c8d" stroke-width="1.6"/>
<path d="M21.8 4.4 L26.5 5.2 L23.8 8.8 Z" fill="#2f7c8d"/>
<circle cx="8.4" cy="21.2" r="7" fill="#fff" stroke="#f7c548" stroke-width="1.2"/>
<text x="8.4" y="24.6" font-size="9.4" font-weight="bold" text-anchor="middle" fill="#f3a81d" font-family="Liberation Sans">$</text>
</svg>
<div style="position:absolute;left:273.3px;top:116.4785px;font-size:13.8px;line-height:13.8px;color:#2b7385;font-weight:bold;white-space:pre;transform:scaleX(0.957);transform-origin:0 0;-webkit-text-stroke:0.3px #2b7385">EVENT MARKETING PLAN</div>
<div style="position:absolute;left:42.5px;top:144.92475000000002px;font-size:8.3px;line-height:8.3px;color:#7b7b7b;font-weight:bold;white-space:pre;">Total income</div>
<div style="position:absolute;left:169.3px;top:144.92475000000002px;font-size:8.3px;line-height:8.3px;color:#7b7b7b;font-weight:bold;white-space:pre;">Total expenses</div>
<div style="position:absolute;left:41.2px;top:158.1px;width:124.5px;height:16.4px;background:#7ea82e"></div>
<div style="position:absolute;left:4px;width:200px;text-align:center;top:160.684px;font-size:11.2px;line-height:11.2px;color:#fff;font-weight:bold;white-space:pre;">$80,146</div>
<div style="position:absolute;left:168.3px;top:158.1px;width:124.5px;height:16.4px;background:#c1272d"></div>
<div style="position:absolute;left:40.6px;top:139.7px;width:127.2px;height:17.6px;border:1.2px solid #3f7a57;border-left:none"></div>
<div style="position:absolute;left:165.4px;top:155px;width:3.2px;height:3.2px;background:#2f6b47"></div>
<div style="position:absolute;left:113.4px;top:187.95425px;font-size:8.9px;line-height:8.9px;color:#4aa3b9;font-weight:bold;white-space:pre;transform:scaleX(0.885);transform-origin:0 0">SUMMER</div>
<div style="position:absolute;left:48.8px;top:198px;width:4.4px;height:4.6px;background:#fdb813"></div>
<div style="position:absolute;left:56.3px;top:196.86px;font-size:8px;line-height:8px;color:#333;font-weight:normal;white-space:pre;-webkit-text-stroke:0.2px #333">Total income</div>
<div style="position:absolute;left:48.8px;top:218.2px;width:4.4px;height:4.5px;background:#d89a1a;border:0.6px solid #f0b030"></div>
<div style="position:absolute;left:48.8px;top:238.3px;width:4.4px;height:4.5px;background:#c1272d"></div>
<div style="position:absolute;left:48.8px;top:259.1px;width:4.4px;height:4.4px;background:#7a9a2e"></div>
<div style="position:absolute;left:56.3px;top:257.46px;font-size:8px;line-height:8px;color:#333;font-weight:normal;white-space:pre;-webkit-text-stroke:0.2px #333">Total</div>
<div style="position:absolute;left:56.3px;top:267.46px;font-size:8px;line-height:8px;color:#333;font-weight:normal;white-space:pre;-webkit-text-stroke:0.2px #333">expenses</div>
<svg style="position:absolute;left:105px;top:210px;" width="110" height="70" viewBox="0 0 110 70">
<g transform="translate(54.3,29.4)">
<path d="M-51,0 A51,26 0 0 0 -22.6,23.3 L-22.6,33.8 A51,26 0 0 1 -51,10.5 Z" fill="#5b7784"/>
<path d="M-22.6,23.3 A51,26 0 0 0 0,26 L0,36.5 A51,26 0 0 1 -22.6,33.8 Z" fill="#4b6222"/>
<path d="M0,26 A51,26 0 0 0 51,0 L51,10.5 A51,26 0 0 1 0,36.5 Z" fill="#b1820f"/>
<path d="M0,0 L0,-26 A51,26 0 0 0 -22.6,23.3 Z" fill="#8db0c1"/>
<path d="M0,0 L-22.6,23.3 A51,26 0 0 0 0,26 Z" fill="#7a9b2f"/>
<path d="M0,0 L0,-26 A51,26 0 0 1 0,26 Z" fill="#fdb813"/>
</g></svg>
<div style="position:absolute;left:559.3px;top:187.0895px;font-size:8.6px;line-height:8.6px;color:#52629c;font-weight:bold;white-space:pre;transform:scaleX(0.915);transform-origin:0 0">and Gross margin</div>
<div style="position:absolute;left:540px;top:213px;width:121.3px;height:0.8px;background:#f6dfd9"></div>
<div style="position:absolute;left:540px;top:224.4px;width:121.3px;height:0.8px;background:#f6dfd9"></div>
<div style="position:absolute;left:540px;top:235.9px;width:121.3px;height:0.8px;background:#f6dfd9"></div>
<div style="position:absolute;left:540px;top:247.3px;width:121.3px;height:0.8px;background:#f6dfd9"></div>
<div style="position:absolute;left:540px;top:259.1px;width:121.3px;height:0.8px;background:#ecd3c9"></div>
<div style="position:absolute;left:557.0px;top:259.3px;width:0.7px;height:2.2px;background:#ecd3c9"></div>
<div style="position:absolute;left:569.9px;top:259.3px;width:0.7px;height:2.2px;background:#ecd3c9"></div>
<div style="position:absolute;left:582.8px;top:259.3px;width:0.7px;height:2.2px;background:#ecd3c9"></div>
<div style="position:absolute;left:595.7px;top:259.3px;width:0.7px;height:2.2px;background:#ecd3c9"></div>
<div style="position:absolute;left:608.6px;top:259.3px;width:0.7px;height:2.2px;background:#ecd3c9"></div>
<div style="position:absolute;left:621.5px;top:259.3px;width:0.7px;height:2.2px;background:#ecd3c9"></div>
<div style="position:absolute;left:634.4px;top:259.3px;width:0.7px;height:2.2px;background:#ecd3c9"></div>
<div style="position:absolute;left:647.3px;top:259.3px;width:0.7px;height:2.2px;background:#ecd3c9"></div>
<div style="position:absolute;left:660.2px;top:259.3px;width:0.7px;height:2.2px;background:#ecd3c9"></div>
<div style="position:absolute;left:463.6px;width:200px;text-align:center;top:268.44225px;font-size:7.3px;line-height:7.3px;color:#5b4c40;font-weight:normal;white-space:pre;-webkit-text-stroke:0.15px #5b4c40">6</div>
<div style="position:absolute;left:476.65px;width:200px;text-align:center;top:268.44225px;font-size:7.3px;line-height:7.3px;color:#5b4c40;font-weight:normal;white-space:pre;-webkit-text-stroke:0.15px #5b4c40">7</div>
<div style="position:absolute;left:489.70000000000005px;width:200px;text-align:center;top:268.44225px;font-size:7.3px;line-height:7.3px;color:#5b4c40;font-weight:normal;white-space:pre;-webkit-text-stroke:0.15px #5b4c40">8</div>
<div style="position:absolute;left:502.75px;width:200px;text-align:center;top:268.44225px;font-size:7.3px;line-height:7.3px;color:#5b4c40;font-weight:normal;white-space:pre;-webkit-text-stroke:0.15px #5b4c40">9</div>
<div style="position:absolute;left:515.8000000000001px;width:200px;text-align:center;top:268.44225px;font-size:7.3px;line-height:7.3px;color:#5b4c40;font-weight:normal;white-space:pre;-webkit-text-stroke:0.15px #5b4c40">10</div>
<div style="position:absolute;left:528.85px;width:200px;text-align:center;top:268.44225px;font-size:7.3px;line-height:7.3px;color:#5b4c40;font-weight:normal;white-space:pre;-webkit-text-stroke:0.15px #5b4c40">11</div>
<div style="position:absolute;left:541.9000000000001px;width:200px;text-align:center;top:268.44225px;font-size:7.3px;line-height:7.3px;color:#5b4c40;font-weight:normal;white-space:pre;-webkit-text-stroke:0.15px #5b4c40">12</div>
<div style="position:absolute;left:554.95px;width:200px;text-align:center;top:268.44225px;font-size:7.3px;line-height:7.3px;color:#5b4c40;font-weight:normal;white-space:pre;-webkit-text-stroke:0.15px #5b4c40">13</div>
<svg style="position:absolute;left:540px;top:210px;" width="125" height="52" viewBox="0 0 125 52">
<polyline points="0,40 23.6,35 36.4,45.9 49.3,39.9 62,37.9 75.9,41.3 89,7.9 102,26.4 115,36.4" fill="none" stroke="#f6b52c" stroke-width="1.3" stroke-linejoin="round"/>
<polyline points="0,43.5 23.6,40.7 36.4,46.4 49.3,43.6 62,43.4 75.9,44.1 89,27.9 102,37 115,41.3" fill="none" stroke="#3a91a8" stroke-width="1.3" stroke-linejoin="round"/>
</svg>
<div style="position:absolute;left:558.8px;top:285.6px;width:1.8px;height:0.9px;background:#f6b52c"></div>
<div style="position:absolute;left:561.3px;top:282.78925000000004px;font-size:6.9px;line-height:6.9px;color:#5b4c40;font-weight:normal;white-space:pre;">Gross margin</div>
<div style="position:absolute;left:42px;top:305.9305px;font-size:7.4px;line-height:7.4px;color:#333;font-weight:normal;white-space:pre;transform:scaleX(0.97);transform-origin:0 0">Effect if in up no depend seemed. In expression an so</div>
<div style="position:absolute;left:561px;top:305.9305px;font-size:7.4px;line-height:7.4px;color:#333;font-weight:normal;white-space:pre;">snug on</div>
<div style="position:absolute;left:42px;top:316.4305px;font-size:7.4px;line-height:7.4px;color:#333;font-weight:normal;white-space:pre;transform:scaleX(0.97);transform-origin:0 0">no need. At none neat am do over will. Do play they nor</div>
<div style="position:absolute;left:125.5px;top:329.7px;width:40.35000000000001px;height:10.799999999999978px;background:#3d5896"></div>
<div style="position:absolute;left:45.67500000000001px;width:200px;text-align:center;top:332.254px;font-size:7.2px;line-height:7.2px;color:#fff;font-weight:bold;white-space:pre;">January</div>
<div style="position:absolute;left:167.65px;top:329.7px;width:40.34999999999998px;height:10.799999999999978px;background:#3d5896"></div>
<div style="position:absolute;left:87.82499999999999px;width:200px;text-align:center;top:332.254px;font-size:7.2px;line-height:7.2px;color:#fff;font-weight:bold;white-space:pre;">February</div>
<div style="position:absolute;left:209.79999999999998px;top:329.7px;width:40.35000000000004px;height:10.799999999999978px;background:#3d5896"></div>
<div style="position:absolute;left:129.975px;width:200px;text-align:center;top:332.254px;font-size:7.2px;line-height:7.2px;color:#fff;font-weight:bold;white-space:pre;">March</div>
<div style="position:absolute;left:251.95000000000002px;top:329.7px;width:40.34999999999998px;height:10.799999999999978px;background:#3d5896"></div>
<div style="position:absolute;left:172.125px;width:200px;text-align:center;top:332.254px;font-size:7.2px;line-height:7.2px;color:#fff;font-weight:bold;white-space:pre;">April</div>
<div style="position:absolute;left:294.09999999999997px;top:329.7px;width:40.35000000000004px;height:10.799999999999978px;background:#3d5896"></div>
<div style="position:absolute;left:214.27499999999998px;width:200px;text-align:center;top:332.254px;font-size:7.2px;line-height:7.2px;color:#fff;font-weight:bold;white-space:pre;">May</div>
<div style="position:absolute;left:336.25px;top:329.7px;width:40.34999999999998px;height:10.799999999999978px;background:#3d5896"></div>
<div style="position:absolute;left:256.425px;width:200px;text-align:center;top:332.254px;font-size:7.2px;line-height:7.2px;color:#fff;font-weight:bold;white-space:pre;">June</div>
<div style="position:absolute;left:378.4px;top:329.7px;width:40.34999999999998px;height:10.799999999999978px;background:#3d5896"></div>
<div style="position:absolute;left:298.575px;width:200px;text-align:center;top:332.254px;font-size:7.2px;line-height:7.2px;color:#fff;font-weight:bold;white-space:pre;">July</div>
<div style="position:absolute;left:420.54999999999995px;top:329.7px;width:40.35000000000004px;height:10.799999999999978px;background:#3d5896"></div>
<div style="position:absolute;left:340.725px;width:200px;text-align:center;top:332.254px;font-size:7.2px;line-height:7.2px;color:#fff;font-weight:bold;white-space:pre;">August</div>
<div style="position:absolute;left:462.7px;top:329.7px;width:40.34999999999998px;height:10.799999999999978px;background:#3d5896"></div>
<div style="position:absolute;left:382.875px;width:200px;text-align:center;top:332.254px;font-size:7.2px;line-height:7.2px;color:#fff;font-weight:bold;white-space:pre;">September</div>
<div style="position:absolute;left:504.84999999999997px;top:329.7px;width:40.34999999999992px;height:10.799999999999978px;background:#3d5896"></div>
<div style="position:absolute;left:425.025px;width:200px;text-align:center;top:332.254px;font-size:7.2px;line-height:7.2px;color:#fff;font-weight:bold;white-space:pre;">October</div>
<div style="position:absolute;left:546.9999999999999px;top:329.7px;width:40.34999999999998px;height:10.799999999999978px;background:#3d5896"></div>
<div style="position:absolute;left:467.17499999999995px;width:200px;text-align:center;top:332.254px;font-size:7.2px;line-height:7.2px;color:#fff;font-weight:bold;white-space:pre;">November</div>
<div style="position:absolute;left:589.1499999999999px;top:329.7px;width:40.350000000000094px;height:10.799999999999978px;background:#3d5896"></div>
<div style="position:absolute;left:509.32499999999993px;width:200px;text-align:center;top:332.254px;font-size:7.2px;line-height:7.2px;color:#fff;font-weight:bold;white-space:pre;">December</div>
<div style="position:absolute;left:631.3px;top:329.7px;width:40.50000000000007px;height:10.799999999999978px;background:#3d5896"></div>
<div style="position:absolute;left:551.55px;width:200px;text-align:center;top:332.254px;font-size:7.2px;line-height:7.2px;color:#fff;font-weight:bold;white-space:pre;">Total</div>
<svg style="position:absolute;left:668.5px;top:328.8px;" width="3" height="3" viewBox="0 0 3 3"><path d="M0 0 H3 V3 Z" fill="#f5a623"/></svg>
<div style="position:absolute;left:41.099999999999994px;top:342.0px;width:82.7px;height:10.800000000000034px;background:#2d8a9e"></div>
<div style="position:absolute;left:42.099999999999994px;top:344.3775px;font-size:7px;line-height:7px;color:#fff;font-weight:bold;white-space:pre;">Company profit</div>
<div style="position:absolute;left:125.39999999999999px;top:342.0px;width:40.550000000000004px;height:10.800000000000034px;background:#d6ecf3"></div>
<div style="position:absolute;left:129.1px;top:344.354px;font-size:7.2px;line-height:7.2px;color:#333;font-weight:normal;white-space:pre;">$</div>
<div style="position:absolute;left:124.6px;width:39.550000000000004px;text-align:right;top:344.354px;font-size:7.2px;line-height:7.2px;color:#333;white-space:pre">5,640.00</div>
<div style="position:absolute;left:167.55px;top:342.0px;width:40.549999999999976px;height:10.800000000000034px;background:#d6ecf3"></div>
<div style="position:absolute;left:171.25px;top:344.354px;font-size:7.2px;line-height:7.2px;color:#333;font-weight:normal;white-space:pre;">$</div>
<div style="position:absolute;left:166.75px;width:39.549999999999976px;text-align:right;top:344.354px;font-size:7.2px;line-height:7.2px;color:#333;white-space:pre">7,823.00</div>
<div style="position:absolute;left:209.7px;top:342.0px;width:40.55000000000003px;height:10.800000000000034px;background:#d6ecf3"></div>
<div style="position:absolute;left:213.39999999999998px;top:344.354px;font-size:7.2px;line-height:7.2px;color:#333;font-weight:normal;white-space:pre;">$</div>
<div style="position:absolute;left:208.89999999999998px;width:39.55000000000003px;text-align:right;top:344.354px;font-size:7.2px;line-height:7.2px;color:#333;white-space:pre">4,586.00</div>
<div style="position:absolute;left:251.85000000000002px;top:342.0px;width:40.549999999999976px;height:10.800000000000034px;background:#d6ecf3"></div>
<div style="position:absolute;left:255.55px;top:344.354px;font-size:7.2px;line-height:7.2px;color:#333;font-weight:normal;white-space:pre;">$</div>
<div style="position:absolute;left:251.05px;width:39.549999999999976px;text-align:right;top:344.354px;font-size:7.2px;line-height:7.2px;color:#333;white-space:pre">1,258.00</div>
<div style="position:absolute;left:294.0px;top:342.0px;width:40.55000000000003px;height:10.800000000000034px;background:#d6ecf3"></div>
<div style="position:absolute;left:297.7px;top:344.354px;font-size:7.2px;line-height:7.2px;color:#333;font-weight:normal;white-space:pre;">$</div>
<div style="position:absolute;left:293.2px;width:39.55000000000003px;text-align:right;top:344.354px;font-size:7.2px;line-height:7.2px;color:#333;white-space:pre">3,658.00</div>
<div style="position:absolute;left:336.15000000000003px;top:342.0px;width:40.549999999999976px;height:10.800000000000034px;background:#d6ecf3"></div>
<div style="position:absolute;left:339.85px;top:344.354px;font-size:7.2px;line-height:7.2px;color:#333;font-weight:normal;white-space:pre;">$</div>
<div style="position:absolute;left:335.35px;width:39.549999999999976px;text-align:right;top:344.354px;font-size:7.2px;line-height:7.2px;color:#333;white-space:pre">1,456.00</div>
<div style="position:absolute;left:378.3px;top:342.0px;width:40.549999999999976px;height:10.800000000000034px;background:#d6ecf3"></div>
<div style="position:absolute;left:382.0px;top:344.354px;font-size:7.2px;line-height:7.2px;color:#333;font-weight:normal;white-space:pre;">$</div>
<div style="position:absolute;left:377.5px;width:39.549999999999976px;text-align:right;top:344.354px;font-size:7.2px;line-height:7.2px;color:#333;white-space:pre">2,589.00</div>
<div style="position:absolute;left:420.45px;top:342.0px;width:40.55000000000003px;height:10.800000000000034px;background:#d6ecf3"></div>
<div style="position:absolute;left:424.15px;top:344.354px;font-size:7.2px;line-height:7.2px;color:#333;font-weight:normal;white-space:pre;">$</div>
<div style="position:absolute;left:419.65px;width:39.55000000000003px;text-align:right;top:344.354px;font-size:7.2px;line-height:7.2px;color:#333;white-space:pre">2,694.00</div>
<div style="position:absolute;left:462.6px;top:342.0px;width:40.549999999999976px;height:10.800000000000034px;background:#d6ecf3"></div>
<div style="position:absolute;left:466.3px;top:344.354px;font-size:7.2px;line-height:7.2px;color:#333;font-weight:normal;white-space:pre;">$</div>
<div style="position:absolute;left:461.8px;width:39.549999999999976px;text-align:right;top:344.354px;font-size:7.2px;line-height:7.2px;color:#333;white-space:pre">2,468.00</div>
<div style="position:absolute;left:504.75px;top:342.0px;width:40.54999999999992px;height:10.800000000000034px;background:#d6ecf3"></div>
<div style="position:absolute;left:508.45px;top:344.354px;font-size:7.2px;line-height:7.2px;color:#333;font-weight:normal;white-space:pre;">$</div>
<div style="position:absolute;left:503.95px;width:39.54999999999992px;text-align:right;top:344.354px;font-size:7.2px;line-height:7.2px;color:#333;white-space:pre">9,543.00</div>
<div style="position:absolute;left:546.8999999999999px;top:342.0px;width:40.549999999999976px;height:10.800000000000034px;background:#d6ecf3"></div>
<div style="position:absolute;left:550.5999999999999px;top:344.354px;font-size:7.2px;line-height:7.2px;color:#333;font-weight:normal;white-space:pre;">$</div>
<div style="position:absolute;left:546.0999999999999px;width:39.549999999999976px;text-align:right;top:344.354px;font-size:7.2px;line-height:7.2px;color:#333;white-space:pre">5,482.00</div>
<div style="position:absolute;left:589.0499999999998px;top:342.0px;width:40.55000000000009px;height:10.800000000000034px;background:#d6ecf3"></div>
<div style="position:absolute;left:592.7499999999999px;top:344.354px;font-size:7.2px;line-height:7.2px;color:#333;font-weight:normal;white-space:pre;">$</div>
<div style="position:absolute;left:588.2499999999999px;width:39.55000000000009px;text-align:right;top:344.354px;font-size:7.2px;line-height:7.2px;color:#333;white-space:pre">3,654.00</div>
<div style="position:absolute;left:631.1999999999999px;top:342.0px;width:40.70000000000007px;height:10.800000000000034px;background:#a6d7e1"></div>
<div style="position:absolute;left:630.4px;width:39.70000000000007px;text-align:right;top:344.354px;font-size:7.2px;line-height:7.2px;color:#333;white-space:pre">50,851.00</div>
<div style="position:absolute;left:634.1999999999999px;top:344.354px;font-size:7.2px;line-height:7.2px;color:#333;font-weight:normal;white-space:pre;">$</div>
<div style="position:absolute;left:41.099999999999994px;top:354.40000000000003px;width:82.7px;height:10.999999999999966px;background:#2d8a9e"></div>
<div style="position:absolute;left:42.099999999999994px;top:356.77750000000003px;font-size:7px;line-height:7px;color:#fff;font-weight:bold;white-space:pre;">Costs of materials</div>
<div style="position:absolute;left:125.39999999999999px;top:354.40000000000003px;width:40.550000000000004px;height:10.999999999999966px;background:#d6ecf3"></div>
<div style="position:absolute;left:129.1px;top:356.754px;font-size:7.2px;line-height:7.2px;color:#333;font-weight:normal;white-space:pre;">$</div>
<div style="position:absolute;left:124.6px;width:39.550000000000004px;text-align:right;top:356.754px;font-size:7.2px;line-height:7.2px;color:#333;white-space:pre">780.00</div>
<div style="position:absolute;left:167.55px;top:354.40000000000003px;width:40.549999999999976px;height:10.999999999999966px;background:#d6ecf3"></div>
<div style="position:absolute;left:171.25px;top:356.754px;font-size:7.2px;line-height:7.2px;color:#333;font-weight:normal;white-space:pre;">$</div>
<div style="position:absolute;left:166.75px;width:39.549999999999976px;text-align:right;top:356.754px;font-size:7.2px;line-height:7.2px;color:#333;white-space:pre">540.00</div>
<div style="position:absolute;left:209.7px;top:354.40000000000003px;width:40.55000000000003px;height:10.999999999999966px;background:#d6ecf3"></div>
<div style="position:absolute;left:213.39999999999998px;top:356.754px;font-size:7.2px;line-height:7.2px;color:#333;font-weight:normal;white-space:pre;">$</div>
<div style="position:absolute;left:208.89999999999998px;width:39.55000000000003px;text-align:right;top:356.754px;font-size:7.2px;line-height:7.2px;color:#333;white-space:pre">360.00</div>
<div style="position:absolute;left:251.85000000000002px;top:354.40000000000003px;width:40.549999999999976px;height:10.999999999999966px;background:#d6ecf3"></div>
<div style="position:absolute;left:255.55px;top:356.754px;font-size:7.2px;line-height:7.2px;color:#333;font-weight:normal;white-space:pre;">$</div>
<div style="position:absolute;left:251.05px;width:39.549999999999976px;text-align:right;top:356.754px;font-size:7.2px;line-height:7.2px;color:#333;white-space:pre">240.00</div>
<div style="position:absolute;left:294.0px;top:354.40000000000003px;width:40.55000000000003px;height:10.999999999999966px;background:#d6ecf3"></div>
<div style="position:absolute;left:297.7px;top:356.754px;font-size:7.2px;line-height:7.2px;color:#333;font-weight:normal;white-space:pre;">$</div>
<div style="position:absolute;left:293.2px;width:39.55000000000003px;text-align:right;top:356.754px;font-size:7.2px;line-height:7.2px;color:#333;white-space:pre">590.00</div>
<div style="position:absolute;left:336.15000000000003px;top:354.40000000000003px;width:40.549999999999976px;height:10.999999999999966px;background:#d6ecf3"></div>
<div style="position:absolute;left:339.85px;top:356.754px;font-size:7.2px;line-height:7.2px;color:#333;font-weight:normal;white-space:pre;">$</div>
<div style="position:absolute;left:335.35px;width:39.549999999999976px;text-align:right;top:356.754px;font-size:7.2px;line-height:7.2px;color:#333;white-space:pre">640.00</div>
<div style="position:absolute;left:378.3px;top:354.40000000000003px;width:40.549999999999976px;height:10.999999999999966px;background:#d6ecf3"></div>
<div style="position:absolute;left:382.0px;top:356.754px;font-size:7.2px;line-height:7.2px;color:#333;font-weight:normal;white-space:pre;">$</div>
<div style="position:absolute;left:377.5px;width:39.549999999999976px;text-align:right;top:356.754px;font-size:7.2px;line-height:7.2px;color:#333;white-space:pre">115.00</div>
<div style="position:absolute;left:420.45px;top:354.40000000000003px;width:40.55000000000003px;height:10.999999999999966px;background:#d6ecf3"></div>
<div style="position:absolute;left:424.15px;top:356.754px;font-size:7.2px;line-height:7.2px;color:#333;font-weight:normal;white-space:pre;">$</div>
<div style="position:absolute;left:419.65px;width:39.55000000000003px;text-align:right;top:356.754px;font-size:7.2px;line-height:7.2px;color:#333;white-space:pre">112.00</div>
<div style="position:absolute;left:462.6px;top:354.40000000000003px;width:40.549999999999976px;height:10.999999999999966px;background:#d6ecf3"></div>
<div style="position:absolute;left:466.3px;top:356.754px;font-size:7.2px;line-height:7.2px;color:#333;font-weight:normal;white-space:pre;">$</div>
<div style="position:absolute;left:461.8px;width:39.549999999999976px;text-align:right;top:356.754px;font-size:7.2px;line-height:7.2px;color:#333;white-space:pre">980.00</div>
<div style="position:absolute;left:504.75px;top:354.40000000000003px;width:40.54999999999992px;height:10.999999999999966px;background:#d6ecf3"></div>
<div style="position:absolute;left:508.45px;top:356.754px;font-size:7.2px;line-height:7.2px;color:#333;font-weight:normal;white-space:pre;">$</div>
<div style="position:absolute;left:503.95px;width:39.54999999999992px;text-align:right;top:356.754px;font-size:7.2px;line-height:7.2px;color:#333;white-space:pre">760.00</div>
<div style="position:absolute;left:546.8999999999999px;top:354.40000000000003px;width:40.549999999999976px;height:10.999999999999966px;background:#d6ecf3"></div>
<div style="position:absolute;left:550.5999999999999px;top:356.754px;font-size:7.2px;line-height:7.2px;color:#333;font-weight:normal;white-space:pre;">$</div>
<div style="position:absolute;left:546.0999999999999px;width:39.549999999999976px;text-align:right;top:356.754px;font-size:7.2px;line-height:7.2px;color:#333;white-space:pre">450.00</div>
<div style="position:absolute;left:589.0499999999998px;top:354.40000000000003px;width:40.55000000000009px;height:10.999999999999966px;background:#d6ecf3"></div>
<div style="position:absolute;left:592.7499999999999px;top:356.754px;font-size:7.2px;line-height:7.2px;color:#333;font-weight:normal;white-space:pre;">$</div>
<div style="position:absolute;left:588.2499999999999px;width:39.55000000000009px;text-align:right;top:356.754px;font-size:7.2px;line-height:7.2px;color:#333;white-space:pre">850.00</div>
<div style="position:absolute;left:631.1999999999999px;top:354.40000000000003px;width:40.70000000000007px;height:10.999999999999966px;background:#a6d7e1"></div>
<div style="position:absolute;left:630.4px;width:39.70000000000007px;text-align:right;top:356.754px;font-size:7.2px;line-height:7.2px;color:#333;white-space:pre">6,417.00</div>
<div style="position:absolute;left:634.1999999999999px;top:356.754px;font-size:7.2px;line-height:7.2px;color:#333;font-weight:normal;white-space:pre;">$</div>
<div style="position:absolute;left:41.099999999999994px;top:367.0px;width:82.7px;height:10.9px;background:#2d8a9e"></div>
<div style="position:absolute;left:42.099999999999994px;top:369.3775px;font-size:7px;line-height:7px;color:#fff;font-weight:bold;white-space:pre;">Overhead costs</div>
<div style="position:absolute;left:125.39999999999999px;top:367.0px;width:40.550000000000004px;height:10.9px;background:#d6ecf3"></div>
<div style="position:absolute;left:129.1px;top:369.354px;font-size:7.2px;line-height:7.2px;color:#333;font-weight:normal;white-space:pre;">$</div>
<div style="position:absolute;left:124.6px;width:39.550000000000004px;text-align:right;top:369.354px;font-size:7.2px;line-height:7.2px;color:#333;white-space:pre">450.00</div>
<div style="position:absolute;left:167.55px;top:367.0px;width:40.549999999999976px;height:10.9px;background:#d6ecf3"></div>
<div style="position:absolute;left:171.25px;top:369.354px;font-size:7.2px;line-height:7.2px;color:#333;font-weight:normal;white-space:pre;">$</div>
<div style="position:absolute;left:166.75px;width:39.549999999999976px;text-align:right;top:369.354px;font-size:7.2px;line-height:7.2px;color:#333;white-space:pre">650.00</div>
<div style="position:absolute;left:209.7px;top:367.0px;width:40.55000000000003px;height:10.9px;background:#d6ecf3"></div>
<div style="position:absolute;left:213.39999999999998px;top:369.354px;font-size:7.2px;line-height:7.2px;color:#333;font-weight:normal;white-space:pre;">$</div>
<div style="position:absolute;left:208.89999999999998px;width:39.55000000000003px;text-align:right;top:369.354px;font-size:7.2px;line-height:7.2px;color:#333;white-space:pre">850.00</div>
<div style="position:absolute;left:251.85000000000002px;top:367.0px;width:40.549999999999976px;height:10.9px;background:#d6ecf3"></div>
<div style="position:absolute;left:255.55px;top:369.354px;font-size:7.2px;line-height:7.2px;color:#333;font-weight:normal;white-space:pre;">$</div>
<div style="position:absolute;left:251.05px;width:39.549999999999976px;text-align:right;top:369.354px;font-size:7.2px;line-height:7.2px;color:#333;white-space:pre">210.00</div>
<div style="position:absolute;left:294.0px;top:367.0px;width:40.55000000000003px;height:10.9px;background:#d6ecf3"></div>
<div style="position:absolute;left:297.7px;top:369.354px;font-size:7.2px;line-height:7.2px;color:#333;font-weight:normal;white-space:pre;">$</div>
<div style="position:absolute;left:293.2px;width:39.55000000000003px;text-align:right;top:369.354px;font-size:7.2px;line-height:7.2px;color:#333;white-space:pre">320.00</div>
<div style="position:absolute;left:336.15000000000003px;top:367.0px;width:40.549999999999976px;height:10.9px;background:#d6ecf3"></div>
<div style="position:absolute;left:339.85px;top:369.354px;font-size:7.2px;line-height:7.2px;color:#333;font-weight:normal;white-space:pre;">$</div>
<div style="position:absolute;left:335.35px;width:39.549999999999976px;text-align:right;top:369.354px;font-size:7.2px;line-height:7.2px;color:#333;white-space:pre">560.00</div>
<div style="position:absolute;left:378.3px;top:367.0px;width:40.549999999999976px;height:10.9px;background:#d6ecf3"></div>
<div style="position:absolute;left:382.0px;top:369.354px;font-size:7.2px;line-height:7.2px;color:#333;font-weight:normal;white-space:pre;">$</div>
<div style="position:absolute;left:377.5px;width:39.549999999999976px;text-align:right;top:369.354px;font-size:7.2px;line-height:7.2px;color:#333;white-space:pre">740.00</div>
<div style="position:absolute;left:420.45px;top:367.0px;width:40.55000000000003px;height:10.9px;background:#d6ecf3"></div>
<div style="position:absolute;left:424.15px;top:369.354px;font-size:7.2px;line-height:7.2px;color:#333;font-weight:normal;white-space:pre;">$</div>
<div style="position:absolute;left:419.65px;width:39.55000000000003px;text-align:right;top:369.354px;font-size:7.2px;line-height:7.2px;color:#333;white-space:pre">150.00</div>
<div style="position:absolute;left:462.6px;top:367.0px;width:40.549999999999976px;height:10.9px;background:#d6ecf3"></div>
<div style="position:absolute;left:466.3px;top:369.354px;font-size:7.2px;line-height:7.2px;color:#333;font-weight:normal;white-space:pre;">$</div>
<div style="position:absolute;left:461.8px;width:39.549999999999976px;text-align:right;top:369.354px;font-size:7.2px;line-height:7.2px;color:#333;white-space:pre">230.00</div>
<div style="position:absolute;left:504.75px;top:367.0px;width:40.54999999999992px;height:10.9px;background:#d6ecf3"></div>
<div style="position:absolute;left:508.45px;top:369.354px;font-size:7.2px;line-height:7.2px;color:#333;font-weight:normal;white-space:pre;">$</div>
<div style="position:absolute;left:503.95px;width:39.54999999999992px;text-align:right;top:369.354px;font-size:7.2px;line-height:7.2px;color:#333;white-space:pre">150.00</div>
<div style="position:absolute;left:546.8999999999999px;top:367.0px;width:40.549999999999976px;height:10.9px;background:#d6ecf3"></div>
<div style="position:absolute;left:550.5999999999999px;top:369.354px;font-size:7.2px;line-height:7.2px;color:#333;font-weight:normal;white-space:pre;">$</div>
<div style="position:absolute;left:546.0999999999999px;width:39.549999999999976px;text-align:right;top:369.354px;font-size:7.2px;line-height:7.2px;color:#333;white-space:pre">560.00</div>
<div style="position:absolute;left:589.0499999999998px;top:367.0px;width:40.55000000000009px;height:10.9px;background:#d6ecf3"></div>
<div style="position:absolute;left:592.7499999999999px;top:369.354px;font-size:7.2px;line-height:7.2px;color:#333;font-weight:normal;white-space:pre;">$</div>
<div style="position:absolute;left:588.2499999999999px;width:39.55000000000009px;text-align:right;top:369.354px;font-size:7.2px;line-height:7.2px;color:#333;white-space:pre">870.00</div>
<div style="position:absolute;left:631.1999999999999px;top:367.0px;width:40.70000000000007px;height:10.9px;background:#a6d7e1"></div>
<div style="position:absolute;left:630.4px;width:39.70000000000007px;text-align:right;top:369.354px;font-size:7.2px;line-height:7.2px;color:#333;white-space:pre">5,740.00</div>
<div style="position:absolute;left:634.1999999999999px;top:369.354px;font-size:7.2px;line-height:7.2px;color:#333;font-weight:normal;white-space:pre;">$</div>
<div style="position:absolute;left:41.099999999999994px;top:379.5px;width:82.7px;height:10.500000000000023px;background:#2d8a9e"></div>
<div style="position:absolute;left:42.099999999999994px;top:381.8775px;font-size:7px;line-height:7px;color:#fff;font-weight:bold;white-space:pre;">Gross margin</div>
<div style="position:absolute;left:125.39999999999999px;top:379.5px;width:40.550000000000004px;height:10.500000000000023px;background:#d6ecf3"></div>
<div style="position:absolute;left:129.1px;top:381.854px;font-size:7.2px;line-height:7.2px;color:#333;font-weight:normal;white-space:pre;">$</div>
<div style="position:absolute;left:124.6px;width:39.550000000000004px;text-align:right;top:381.854px;font-size:7.2px;line-height:7.2px;color:#333;white-space:pre">4,410.00</div>
<div style="position:absolute;left:167.55px;top:379.5px;width:40.549999999999976px;height:10.500000000000023px;background:#d6ecf3"></div>
<div style="position:absolute;left:171.25px;top:381.854px;font-size:7.2px;line-height:7.2px;color:#333;font-weight:normal;white-space:pre;">$</div>
<div style="position:absolute;left:166.75px;width:39.549999999999976px;text-align:right;top:381.854px;font-size:7.2px;line-height:7.2px;color:#333;white-space:pre">6,633.00</div>
<div style="position:absolute;left:209.7px;top:379.5px;width:40.55000000000003px;height:10.500000000000023px;background:#d6ecf3"></div>
<div style="position:absolute;left:213.39999999999998px;top:381.854px;font-size:7.2px;line-height:7.2px;color:#333;font-weight:normal;white-space:pre;">$</div>
<div style="position:absolute;left:208.89999999999998px;width:39.55000000000003px;text-align:right;top:381.854px;font-size:7.2px;line-height:7.2px;color:#333;white-space:pre">3,376.00</div>
<div style="position:absolute;left:251.85000000000002px;top:379.5px;width:40.549999999999976px;height:10.500000000000023px;background:#d6ecf3"></div>
<div style="position:absolute;left:255.55px;top:381.854px;font-size:7.2px;line-height:7.2px;color:#333;font-weight:normal;white-space:pre;">$</div>
<div style="position:absolute;left:251.05px;width:39.549999999999976px;text-align:right;top:381.854px;font-size:7.2px;line-height:7.2px;color:#333;white-space:pre">808.00</div>
<div style="position:absolute;left:294.0px;top:379.5px;width:40.55000000000003px;height:10.500000000000023px;background:#d6ecf3"></div>
<div style="position:absolute;left:297.7px;top:381.854px;font-size:7.2px;line-height:7.2px;color:#333;font-weight:normal;white-space:pre;">$</div>
<div style="position:absolute;left:293.2px;width:39.55000000000003px;text-align:right;top:381.854px;font-size:7.2px;line-height:7.2px;color:#333;white-space:pre">2,748.00</div>
<div style="position:absolute;left:336.15000000000003px;top:379.5px;width:40.549999999999976px;height:10.500000000000023px;background:#d6ecf3"></div>
<div style="position:absolute;left:339.85px;top:381.854px;font-size:7.2px;line-height:7.2px;color:#333;font-weight:normal;white-space:pre;">$</div>
<div style="position:absolute;left:335.35px;width:39.549999999999976px;text-align:right;top:381.854px;font-size:7.2px;line-height:7.2px;color:#333;white-space:pre">256.00</div>
<div style="position:absolute;left:378.3px;top:379.5px;width:40.549999999999976px;height:10.500000000000023px;background:#d6ecf3"></div>
<div style="position:absolute;left:382.0px;top:381.854px;font-size:7.2px;line-height:7.2px;color:#333;font-weight:normal;white-space:pre;">$</div>
<div style="position:absolute;left:377.5px;width:39.549999999999976px;text-align:right;top:381.854px;font-size:7.2px;line-height:7.2px;color:#333;white-space:pre">1,734.00</div>
<div style="position:absolute;left:420.45px;top:379.5px;width:40.55000000000003px;height:10.500000000000023px;background:#d6ecf3"></div>
<div style="position:absolute;left:424.15px;top:381.854px;font-size:7.2px;line-height:7.2px;color:#333;font-weight:normal;white-space:pre;">$</div>
<div style="position:absolute;left:419.65px;width:39.55000000000003px;text-align:right;top:381.854px;font-size:7.2px;line-height:7.2px;color:#333;white-space:pre">2,432.00</div>
<div style="position:absolute;left:462.6px;top:379.5px;width:40.549999999999976px;height:10.500000000000023px;background:#d6ecf3"></div>
<div style="position:absolute;left:466.3px;top:381.854px;font-size:7.2px;line-height:7.2px;color:#333;font-weight:normal;white-space:pre;">$</div>
<div style="position:absolute;left:461.8px;width:39.549999999999976px;text-align:right;top:381.854px;font-size:7.2px;line-height:7.2px;color:#333;white-space:pre">1,258.00</div>
<div style="position:absolute;left:504.75px;top:379.5px;width:40.54999999999992px;height:10.500000000000023px;background:#d6ecf3"></div>
<div style="position:absolute;left:508.45px;top:381.854px;font-size:7.2px;line-height:7.2px;color:#333;font-weight:normal;white-space:pre;">$</div>
<div style="position:absolute;left:503.95px;width:39.54999999999992px;text-align:right;top:381.854px;font-size:7.2px;line-height:7.2px;color:#333;white-space:pre">8,633.00</div>
<div style="position:absolute;left:546.8999999999999px;top:379.5px;width:40.549999999999976px;height:10.500000000000023px;background:#d6ecf3"></div>
<div style="position:absolute;left:550.5999999999999px;top:381.854px;font-size:7.2px;line-height:7.2px;color:#333;font-weight:normal;white-space:pre;">$</div>
<div style="position:absolute;left:546.0999999999999px;width:39.549999999999976px;text-align:right;top:381.854px;font-size:7.2px;line-height:7.2px;color:#333;white-space:pre">4,472.00</div>
<div style="position:absolute;left:589.0499999999998px;top:379.5px;width:40.55000000000009px;height:10.500000000000023px;background:#d6ecf3"></div>
<div style="position:absolute;left:592.7499999999999px;top:381.854px;font-size:7.2px;line-height:7.2px;color:#333;font-weight:normal;white-space:pre;">$</div>
<div style="position:absolute;left:588.2499999999999px;width:39.55000000000009px;text-align:right;top:381.854px;font-size:7.2px;line-height:7.2px;color:#333;white-space:pre">1,934.00</div>
<div style="position:absolute;left:631.1999999999999px;top:379.5px;width:40.70000000000007px;height:10.500000000000023px;background:#a6d7e1"></div>
<div style="position:absolute;left:630.4px;width:39.70000000000007px;text-align:right;top:381.854px;font-size:7.2px;line-height:7.2px;color:#333;white-space:pre">38,694.00</div>
<div style="position:absolute;left:634.1999999999999px;top:381.854px;font-size:7.2px;line-height:7.2px;color:#333;font-weight:normal;white-space:pre;">$</div>
<div style="position:absolute;left:41.099999999999994px;top:391.6px;width:82.7px;height:10.9px;background:#2d8a9e"></div>
<div style="position:absolute;left:42.099999999999994px;top:393.9775px;font-size:7px;line-height:7px;color:#fff;font-weight:bold;white-space:pre;">Cost of sales</div>
<div style="position:absolute;left:125.39999999999999px;top:391.6px;width:40.550000000000004px;height:10.9px;background:#d6ecf3"></div>
<div style="position:absolute;left:129.1px;top:393.954px;font-size:7.2px;line-height:7.2px;color:#333;font-weight:normal;white-space:pre;">$</div>
<div style="position:absolute;left:124.6px;width:39.550000000000004px;text-align:right;top:393.954px;font-size:7.2px;line-height:7.2px;color:#333;white-space:pre">5,025.00</div>
<div style="position:absolute;left:167.55px;top:391.6px;width:40.549999999999976px;height:10.9px;background:#d6ecf3"></div>
<div style="position:absolute;left:171.25px;top:393.954px;font-size:7.2px;line-height:7.2px;color:#333;font-weight:normal;white-space:pre;">$</div>
<div style="position:absolute;left:166.75px;width:39.549999999999976px;text-align:right;top:393.954px;font-size:7.2px;line-height:7.2px;color:#333;white-space:pre">7,228.00</div>
<div style="position:absolute;left:209.7px;top:391.6px;width:40.55000000000003px;height:10.9px;background:#d6ecf3"></div>
<div style="position:absolute;left:213.39999999999998px;top:393.954px;font-size:7.2px;line-height:7.2px;color:#333;font-weight:normal;white-space:pre;">$</div>
<div style="position:absolute;left:208.89999999999998px;width:39.55000000000003px;text-align:right;top:393.954px;font-size:7.2px;line-height:7.2px;color:#333;white-space:pre">3,981.00</div>
<div style="position:absolute;left:251.85000000000002px;top:391.6px;width:40.549999999999976px;height:10.9px;background:#d6ecf3"></div>
<div style="position:absolute;left:255.55px;top:393.954px;font-size:7.2px;line-height:7.2px;color:#333;font-weight:normal;white-space:pre;">$</div>
<div style="position:absolute;left:251.05px;width:39.549999999999976px;text-align:right;top:393.954px;font-size:7.2px;line-height:7.2px;color:#333;white-space:pre">1,033.00</div>
<div style="position:absolute;left:294.0px;top:391.6px;width:40.55000000000003px;height:10.9px;background:#d6ecf3"></div>
<div style="position:absolute;left:297.7px;top:393.954px;font-size:7.2px;line-height:7.2px;color:#333;font-weight:normal;white-space:pre;">$</div>
<div style="position:absolute;left:293.2px;width:39.55000000000003px;text-align:right;top:393.954px;font-size:7.2px;line-height:7.2px;color:#333;white-space:pre">3,203.00</div>
<div style="position:absolute;left:336.15000000000003px;top:391.6px;width:40.549999999999976px;height:10.9px;background:#d6ecf3"></div>
<div style="position:absolute;left:339.85px;top:393.954px;font-size:7.2px;line-height:7.2px;color:#333;font-weight:normal;white-space:pre;">$</div>
<div style="position:absolute;left:335.35px;width:39.549999999999976px;text-align:right;top:393.954px;font-size:7.2px;line-height:7.2px;color:#333;white-space:pre">856.00</div>
<div style="position:absolute;left:378.3px;top:391.6px;width:40.549999999999976px;height:10.9px;background:#d6ecf3"></div>
<div style="position:absolute;left:382.0px;top:393.954px;font-size:7.2px;line-height:7.2px;color:#333;font-weight:normal;white-space:pre;">$</div>
<div style="position:absolute;left:377.5px;width:39.549999999999976px;text-align:right;top:393.954px;font-size:7.2px;line-height:7.2px;color:#333;white-space:pre">2,161.50</div>
<div style="position:absolute;left:420.45px;top:391.6px;width:40.55000000000003px;height:10.9px;background:#d6ecf3"></div>
<div style="position:absolute;left:424.15px;top:393.954px;font-size:7.2px;line-height:7.2px;color:#333;font-weight:normal;white-space:pre;">$</div>
<div style="position:absolute;left:419.65px;width:39.55000000000003px;text-align:right;top:393.954px;font-size:7.2px;line-height:7.2px;color:#333;white-space:pre">2,563.00</div>
<div style="position:absolute;left:462.6px;top:391.6px;width:40.549999999999976px;height:10.9px;background:#d6ecf3"></div>
<div style="position:absolute;left:466.3px;top:393.954px;font-size:7.2px;line-height:7.2px;color:#333;font-weight:normal;white-space:pre;">$</div>
<div style="position:absolute;left:461.8px;width:39.549999999999976px;text-align:right;top:393.954px;font-size:7.2px;line-height:7.2px;color:#333;white-space:pre">1,863.00</div>
<div style="position:absolute;left:504.75px;top:391.6px;width:40.54999999999992px;height:10.9px;background:#d6ecf3"></div>
<div style="position:absolute;left:508.45px;top:393.954px;font-size:7.2px;line-height:7.2px;color:#333;font-weight:normal;white-space:pre;">$</div>
<div style="position:absolute;left:503.95px;width:39.54999999999992px;text-align:right;top:393.954px;font-size:7.2px;line-height:7.2px;color:#333;white-space:pre">9,088.00</div>
<div style="position:absolute;left:546.8999999999999px;top:391.6px;width:40.549999999999976px;height:10.9px;background:#d6ecf3"></div>
<div style="position:absolute;left:550.5999999999999px;top:393.954px;font-size:7.2px;line-height:7.2px;color:#333;font-weight:normal;white-space:pre;">$</div>
<div style="position:absolute;left:546.0999999999999px;width:39.549999999999976px;text-align:right;top:393.954px;font-size:7.2px;line-height:7.2px;color:#333;white-space:pre">4,977.00</div>
<div style="position:absolute;left:589.0499999999998px;top:391.6px;width:40.55000000000009px;height:10.9px;background:#d6ecf3"></div>
<div style="position:absolute;left:592.7499999999999px;top:393.954px;font-size:7.2px;line-height:7.2px;color:#333;font-weight:normal;white-space:pre;">$</div>
<div style="position:absolute;left:588.2499999999999px;width:39.55000000000009px;text-align:right;top:393.954px;font-size:7.2px;line-height:7.2px;color:#333;white-space:pre">2,794.00</div>
<div style="position:absolute;left:631.1999999999999px;top:391.6px;width:40.70000000000007px;height:10.9px;background:#a6d7e1"></div>
<div style="position:absolute;left:630.4px;width:39.70000000000007px;text-align:right;top:393.954px;font-size:7.2px;line-height:7.2px;color:#333;white-space:pre">44,772.50</div>
<div style="position:absolute;left:634.1999999999999px;top:393.954px;font-size:7.2px;line-height:7.2px;color:#333;font-weight:normal;white-space:pre;">$</div>
<div style="position:absolute;left:41.099999999999994px;top:404.1px;width:82.7px;height:10.799999999999978px;background:#2d8a9e"></div>
<div style="position:absolute;left:42.099999999999994px;top:406.4775px;font-size:7px;line-height:7px;color:#fff;font-weight:bold;white-space:pre;">Business expense</div>
<div style="position:absolute;left:125.39999999999999px;top:404.1px;width:40.550000000000004px;height:10.799999999999978px;background:#d6ecf3"></div>
<div style="position:absolute;left:129.1px;top:406.454px;font-size:7.2px;line-height:7.2px;color:#333;font-weight:normal;white-space:pre;">$</div>
<div style="position:absolute;left:124.6px;width:39.550000000000004px;text-align:right;top:406.454px;font-size:7.2px;line-height:7.2px;color:#333;white-space:pre">1,230.00</div>
<div style="position:absolute;left:167.55px;top:404.1px;width:40.549999999999976px;height:10.799999999999978px;background:#d6ecf3"></div>
<div style="position:absolute;left:171.25px;top:406.454px;font-size:7.2px;line-height:7.2px;color:#333;font-weight:normal;white-space:pre;">$</div>
<div style="position:absolute;left:166.75px;width:39.549999999999976px;text-align:right;top:406.454px;font-size:7.2px;line-height:7.2px;color:#333;white-space:pre">1,190.00</div>
<div style="position:absolute;left:209.7px;top:404.1px;width:40.55000000000003px;height:10.799999999999978px;background:#d6ecf3"></div>
<div style="position:absolute;left:213.39999999999998px;top:406.454px;font-size:7.2px;line-height:7.2px;color:#333;font-weight:normal;white-space:pre;">$</div>
<div style="position:absolute;left:208.89999999999998px;width:39.55000000000003px;text-align:right;top:406.454px;font-size:7.2px;line-height:7.2px;color:#333;white-space:pre">1,210.00</div>
<div style="position:absolute;left:251.85000000000002px;top:404.1px;width:40.549999999999976px;height:10.799999999999978px;background:#d6ecf3"></div>
<div style="position:absolute;left:255.55px;top:406.454px;font-size:7.2px;line-height:7.2px;color:#333;font-weight:normal;white-space:pre;">$</div>
<div style="position:absolute;left:251.05px;width:39.549999999999976px;text-align:right;top:406.454px;font-size:7.2px;line-height:7.2px;color:#333;white-space:pre">450.00</div>
<div style="position:absolute;left:294.0px;top:404.1px;width:40.55000000000003px;height:10.799999999999978px;background:#d6ecf3"></div>
<div style="position:absolute;left:297.7px;top:406.454px;font-size:7.2px;line-height:7.2px;color:#333;font-weight:normal;white-space:pre;">$</div>
<div style="position:absolute;left:293.2px;width:39.55000000000003px;text-align:right;top:406.454px;font-size:7.2px;line-height:7.2px;color:#333;white-space:pre">910.00</div>
<div style="position:absolute;left:336.15000000000003px;top:404.1px;width:40.549999999999976px;height:10.799999999999978px;background:#d6ecf3"></div>
<div style="position:absolute;left:339.85px;top:406.454px;font-size:7.2px;line-height:7.2px;color:#333;font-weight:normal;white-space:pre;">$</div>
<div style="position:absolute;left:335.35px;width:39.549999999999976px;text-align:right;top:406.454px;font-size:7.2px;line-height:7.2px;color:#333;white-space:pre">1,200.00</div>
<div style="position:absolute;left:378.3px;top:404.1px;width:40.549999999999976px;height:10.799999999999978px;background:#d6ecf3"></div>
<div style="position:absolute;left:382.0px;top:406.454px;font-size:7.2px;line-height:7.2px;color:#333;font-weight:normal;white-space:pre;">$</div>
<div style="position:absolute;left:377.5px;width:39.549999999999976px;text-align:right;top:406.454px;font-size:7.2px;line-height:7.2px;color:#333;white-space:pre">855.00</div>
<div style="position:absolute;left:420.45px;top:404.1px;width:40.55000000000003px;height:10.799999999999978px;background:#d6ecf3"></div>
<div style="position:absolute;left:424.15px;top:406.454px;font-size:7.2px;line-height:7.2px;color:#333;font-weight:normal;white-space:pre;">$</div>
<div style="position:absolute;left:419.65px;width:39.55000000000003px;text-align:right;top:406.454px;font-size:7.2px;line-height:7.2px;color:#333;white-space:pre">262.00</div>
<div style="position:absolute;left:462.6px;top:404.1px;width:40.549999999999976px;height:10.799999999999978px;background:#d6ecf3"></div>
<div style="position:absolute;left:466.3px;top:406.454px;font-size:7.2px;line-height:7.2px;color:#333;font-weight:normal;white-space:pre;">$</div>
<div style="position:absolute;left:461.8px;width:39.549999999999976px;text-align:right;top:406.454px;font-size:7.2px;line-height:7.2px;color:#333;white-space:pre">1,210.00</div>
<div style="position:absolute;left:504.75px;top:404.1px;width:40.54999999999992px;height:10.799999999999978px;background:#d6ecf3"></div>
<div style="position:absolute;left:508.45px;top:406.454px;font-size:7.2px;line-height:7.2px;color:#333;font-weight:normal;white-space:pre;">$</div>
<div style="position:absolute;left:503.95px;width:39.54999999999992px;text-align:right;top:406.454px;font-size:7.2px;line-height:7.2px;color:#333;white-space:pre">910.00</div>
<div style="position:absolute;left:546.8999999999999px;top:404.1px;width:40.549999999999976px;height:10.799999999999978px;background:#d6ecf3"></div>
<div style="position:absolute;left:550.5999999999999px;top:406.454px;font-size:7.2px;line-height:7.2px;color:#333;font-weight:normal;white-space:pre;">$</div>
<div style="position:absolute;left:546.0999999999999px;width:39.549999999999976px;text-align:right;top:406.454px;font-size:7.2px;line-height:7.2px;color:#333;white-space:pre">1,010.00</div>
<div style="position:absolute;left:589.0499999999998px;top:404.1px;width:40.55000000000009px;height:10.799999999999978px;background:#d6ecf3"></div>
<div style="position:absolute;left:592.7499999999999px;top:406.454px;font-size:7.2px;line-height:7.2px;color:#333;font-weight:normal;white-space:pre;">$</div>
<div style="position:absolute;left:588.2499999999999px;width:39.55000000000009px;text-align:right;top:406.454px;font-size:7.2px;line-height:7.2px;color:#333;white-space:pre">1,720.00</div>
<div style="position:absolute;left:631.1999999999999px;top:404.1px;width:40.70000000000007px;height:10.799999999999978px;background:#a6d7e1"></div>
<div style="position:absolute;left:630.4px;width:39.70000000000007px;text-align:right;top:406.454px;font-size:7.2px;line-height:7.2px;color:#333;white-space:pre">12,157.00</div>
<div style="position:absolute;left:634.1999999999999px;top:406.454px;font-size:7.2px;line-height:7.2px;color:#333;font-weight:normal;white-space:pre;">$</div>
<div style="position:absolute;left:735.2px;top:91.2px;width:9.6px;height:330px;background:#f1f1f1;border-left:1px solid #e0e0e0"></div>
<div style="position:absolute;left:736.3px;top:93.4px;width:6.6px;height:6.3px;background:#fff;border:0.6px solid #d0d0d0"></div>
<svg style="position:absolute;left:737.2px;top:95px;" width="5" height="3" viewBox="0 0 5 3"><path d="M0.6 2.4 L2.4 0.6 L4.2 2.4" fill="#999"/></svg>
<div style="position:absolute;left:735.8px;top:108.2px;width:7.2px;height:118.5px;background:#fff;border:0.6px solid #d0d0d0"></div>
<svg style="position:absolute;left:737.4px;top:164.5px;" width="4" height="5" viewBox="0 0 4 5"><path d="M0 0.8 H4 M0 2.3 H4 M0 3.8 H4" stroke="#bbb" stroke-width="0.6"/></svg>
<div style="position:absolute;left:736.3px;top:406px;width:6.6px;height:6.3px;background:#fff;border:0.6px solid #d0d0d0"></div>
<svg style="position:absolute;left:737.2px;top:407.8px;" width="5" height="3" viewBox="0 0 5 3"><path d="M0.6 0.6 L2.4 2.4 L4.2 0.6" fill="#999"/></svg>
<div style="position:absolute;left:24px;top:414.7px;width:711.2px;height:6.9px;background:#f1f1f1;border-top:1px solid #e0e0e0"></div>
<div style="position:absolute;left:25px;top:414.9px;width:7.8px;height:6.4px;background:#fff;border:0.6px solid #d0d0d0"></div>
<svg style="position:absolute;left:27.4px;top:416.2px;" width="3" height="4" viewBox="0 0 3 4"><path d="M2.4 0.4 L0.6 2 L2.4 3.6" fill="#999"/></svg>
<div style="position:absolute;left:33px;top:415px;width:652.5px;height:6.2px;background:#fff;border:0.6px solid #d6d6d6"></div>
<svg style="position:absolute;left:356px;top:416.3px;" width="7" height="4" viewBox="0 0 7 4"><path d="M0.8 0 V4 M2.6 0 V4 M4.4 0 V4 M6.2 0 V4" stroke="#c4c4c4" stroke-width="0.6"/></svg>
<div style="position:absolute;left:727.7px;top:414.9px;width:6px;height:6.3px;background:#fff;border:0.6px solid #d0d0d0"></div>
<svg style="position:absolute;left:729.4px;top:416.2px;" width="3" height="4" viewBox="0 0 3 4"><path d="M0.6 0.4 L2.4 2 L0.6 3.6" fill="#999"/></svg>
<div style="position:absolute;left:744px;top:75px;width:24px;height:346.5px;background:#f7f7f7;border-left:1px solid #dcdcdc"></div>
<svg style="position:absolute;left:7.5px;top:90.5px;" width="10" height="10" viewBox="0 0 10 10"><g fill="none" stroke="#555" stroke-width="0.9"><circle cx="4" cy="4" r="3.3"/><path d="M6.4 6.4 L9.2 9.2"/></g></svg>
<svg style="position:absolute;left:6.8px;top:113.2px;" width="12" height="10" viewBox="0 0 12 10"><g fill="none" stroke="#555" stroke-width="0.9"><path d="M0.7 0.7 H10.3 V6.8 H3.6 L1.8 8.6 V6.8 H0.7 Z"/><path d="M2.4 2.8 H8.6 M2.4 4.6 H7"/></g><rect x="6" y="5.6" width="5.6" height="3.6" fill="#f4b400"/><path d="M7 7.4 H10.6" stroke="#7a5a00" stroke-width="0.5"/></svg>
<svg style="position:absolute;left:6.8px;top:137.2px;" width="12" height="10" viewBox="0 0 12 10"><g fill="none" stroke="#555" stroke-width="0.9"><path d="M0.7 0.7 H7.8 V2.6 M2.2 5.6 L1.5 6.3 V5.3 H0.7 V0.7"/><path d="M3.3 3 H10.9 V7.7 H9.8 V8.9 L8.6 7.7 H3.3 Z"/><path d="M4.8 5.3 H9.4"/></g></svg>
<svg style="position:absolute;left:7px;top:161px;" width="11" height="9" viewBox="0 0 11 9"><text x="5.2" y="4.2" font-size="4.6" font-weight="bold" text-anchor="middle" fill="#555" font-family="Liberation Sans">ABC</text><path d="M3.2 5.2 L5.4 7.8 L8.6 4.4" fill="none" stroke="#555" stroke-width="0.9"/></svg>
<svg style="position:absolute;left:7px;top:184px;" width="11" height="9" viewBox="0 0 11 9"><g fill="#555"><path d="M0.6 3 H3 L7.8 0.6 V8.2 L3 5.8 H0.6 Z" fill="none" stroke="#555" stroke-width="0.9"/><rect x="2" y="5.8" width="1.6" height="2.8"/><path d="M8.8 2.8 Q10.6 4.4 8.8 6" fill="none" stroke="#555" stroke-width="0.8"/></g></svg>
<svg style="position:absolute;left:7.4px;top:206.8px;" width="11" height="11" viewBox="0 0 11 11"><circle cx="5.2" cy="5.2" r="4.5" fill="none" stroke="#555" stroke-width="0.9"/><path d="M5.2 4.4 V8" stroke="#555" stroke-width="0.9"/><rect x="4.7" y="2.4" width="1" height="1" fill="#555"/></svg>
<svg style="position:absolute;left:751.5px;top:90.5px;" width="11" height="9" viewBox="0 0 11 9"><rect x="0.7" y="0.7" width="9.6" height="7.4" fill="none" stroke="#555" stroke-width="0.95" rx="0.6"/><rect x="2.2" y="3.3" width="6.6" height="2.4" fill="#777"/><path d="M0.7 2.4 H10.3" stroke="#555" stroke-width="0.6"/></svg>
<svg style="position:absolute;left:751.5px;top:114.2px;" width="11" height="8" viewBox="0 0 11 8"><g fill="none" stroke="#a8a8a8" stroke-width="0.8"><rect x="0.6" y="0.6" width="9.8" height="6.6"/><path d="M0.6 2.8 H10.4 M0.6 5 H10.4 M3.9 0.6 V7.2 M7.1 0.6 V7.2"/></g></svg>
<svg style="position:absolute;left:751.5px;top:136.8px;" width="11" height="10" viewBox="0 0 11 10"><g fill="none" stroke="#a8a8a8" stroke-width="0.8"><path d="M4.6 5.6 H0.6 V0.6 H6 V3.6"/><circle cx="6.6" cy="6.2" r="3.1" fill="#f7f7f7"/></g></svg>
<svg style="position:absolute;left:751.5px;top:159.4px;" width="11" height="11" viewBox="0 0 11 11"><g fill="none" stroke="#a8a8a8" stroke-width="0.8"><rect x="0.6" y="0.6" width="9.6" height="9.8"/><path d="M0.8 8.8 L4 5.6 L6 7.2 L10 3.6"/><circle cx="3.4" cy="3" r="0.9"/></g></svg>
<svg style="position:absolute;left:752px;top:184px;" width="10" height="10" viewBox="0 0 10 10"><g fill="#b0b0b0"><rect x="0.5" y="6.8" width="1.8" height="2.6"/><rect x="3.6" y="4.6" width="1.8" height="4.8"/><rect x="6.8" y="0.6" width="1.8" height="8.8" fill="none" stroke="#b0b0b0" stroke-width="0.6"/></g></svg>
<svg style="position:absolute;left:753px;top:207px;" width="9" height="9" viewBox="0 0 9 9"><path d="M3.2 0.6 H7.6 M5 0.6 V8.4 M6.6 0.6 V8.4" stroke="#a8a8a8" stroke-width="0.8"/><path d="M4.6 0.6 C1.6 0.6 1.6 4.6 4.6 4.6 Z" fill="#a8a8a8"/></svg>
<svg style="position:absolute;left:752px;top:229.5px;" width="11" height="11" viewBox="0 0 11 11"><text x="5" y="6.4" font-size="6.4" text-anchor="middle" fill="#a8a8a8" font-family="Liberation Sans">Ta</text><path d="M1.6 9.8 Q5 6.8 8.6 9.8" fill="none" stroke="#a8a8a8" stroke-width="0.7"/></svg>
<svg style="position:absolute;left:752px;top:253px;" width="11" height="11" viewBox="0 0 11 11"><g fill="none" stroke="#a8a8a8" stroke-width="0.75"><rect x="0.6" y="0.6" width="2.2" height="2.4"/><rect x="4.2" y="0.6" width="6" height="2.4"/><rect x="0.6" y="4.4" width="2.2" height="5.6"/><path d="M5 5.2 V8.6 H9 M8 7.6 L9.2 8.6 L8 9.6 M9.6 6.6 V4.8"/></g></svg>
<svg style="position:absolute;left:752px;top:276.6px;" width="11" height="11.5" viewBox="0 0 11 11.5"><g fill="none" stroke="#a8a8a8" stroke-width="0.8"><rect x="0.6" y="0.6" width="8.4" height="7.8"/><path d="M0.6 3 H9 M0.6 5.4 H6"/></g><path d="M5.4 6.6 H10.8 L8.8 8.8 V11 L7.4 10.2 V8.8 Z" fill="#888"/></svg>
<div style="position:absolute;left:210px;top:144.2px;width:349px;height:180.90000000000003px;background:#fff;border:1px solid #cbcbcb;border-radius:3px;box-shadow:0 1px 6px rgba(0,0,0,0.25)"></div>
<div style="position:absolute;left:210.5px;top:144.7px;width:348px;height:21.100000000000023px;background:#f4f4f4;border-bottom:1px solid #cbcbcb;border-radius:3px 3px 0 0"></div>
<div style="position:absolute;left:284.5px;width:200px;text-align:center;top:152.11875px;font-size:7.5px;line-height:7.5px;color:#444;font-weight:bold;white-space:pre;">Watch window</div>
<svg style="position:absolute;left:544px;top:151.5px;" width="9.5" height="9" viewBox="0 0 9.5 9"><path d="M0.8 0.8 L8.5 8.3 M8.5 0.8 L0.8 8.3" stroke="#888" stroke-width="0.85"/></svg>
<div style="position:absolute;left:217px;top:170.3px;width:61.3px;height:13.2px;background:#fff;border:1px solid #cfcfcf;border-radius:1px"></div>
<div style="position:absolute;left:147.7px;width:200px;text-align:center;top:173.78924999999998px;font-size:6.9px;line-height:6.9px;color:#444;font-weight:normal;white-space:pre;">Add watch</div>
<div style="position:absolute;left:284.1px;top:170.4px;width:60.9px;height:13.2px;background:#fff;border:1px solid #e4e4e4;border-radius:1px"></div>
<div style="position:absolute;left:337.5px;top:170.9px;width:0.8px;height:12.2px;background:#e4e4e4"></div>
<div style="position:absolute;left:211px;width:200px;text-align:center;top:173.78924999999998px;font-size:6.9px;line-height:6.9px;color:#bdbdbd;font-weight:normal;white-space:pre;">Delete watch</div>
<svg style="position:absolute;left:339.5px;top:175.6px;" width="4" height="3" viewBox="0 0 4 3"><path d="M0.5 0.6 L2 2.1 L3.5 0.6" fill="none" stroke="#bbb" stroke-width="0.7"/></svg>
<div style="position:absolute;left:217px;top:194.97750000000002px;font-size:7px;line-height:7px;color:#444;font-weight:bold;white-space:pre;">Book</div>
<div style="position:absolute;left:264.7px;top:194.97750000000002px;font-size:7px;line-height:7px;color:#444;font-weight:bold;white-space:pre;">Sheet</div>
<div style="position:absolute;left:307.7px;top:194.97750000000002px;font-size:7px;line-height:7px;color:#444;font-weight:bold;white-space:pre;">Name</div>
<div style="position:absolute;left:350.5px;top:194.97750000000002px;font-size:7px;line-height:7px;color:#444;font-weight:bold;white-space:pre;">Cell</div>
<div style="position:absolute;left:393.8px;top:194.97750000000002px;font-size:7px;line-height:7px;color:#444;font-weight:bold;white-space:pre;">Value</div>
<div style="position:absolute;left:462.4px;top:194.97750000000002px;font-size:7px;line-height:7px;color:#444;font-weight:bold;white-space:pre;">Formula</div>
<div style="position:absolute;left:216.6px;top:203.3px;width:334.3px;height:88.2px;border:1px solid #d4d4d4"></div>
<div style="position:absolute;left:221.3px;top:208.401px;font-size:6.8px;line-height:6.8px;color:#555;font-weight:normal;white-space:pre;">ONLYOFF...</div>
<div style="position:absolute;left:264.7px;top:208.401px;font-size:6.8px;line-height:6.8px;color:#555;font-weight:normal;white-space:pre;">PLAN</div>
<div style="position:absolute;left:351.1px;top:208.401px;font-size:6.8px;line-height:6.8px;color:#555;font-weight:normal;white-space:pre;">C26</div>
<div style="position:absolute;left:394.8px;top:208.401px;font-size:6.8px;line-height:6.8px;color:#555;font-weight:normal;white-space:pre;">$ 3,261.00</div>
<div style="position:absolute;left:462.9px;top:208.401px;font-size:6.8px;line-height:6.8px;color:#555;font-weight:normal;white-space:pre;">=AVERAGE(C19:C23)</div>
<div style="position:absolute;left:217.2px;top:217.95000000000002px;width:333.2px;height:0.8px;background:#dadada"></div>
<div style="position:absolute;left:221.3px;top:223.05100000000002px;font-size:6.8px;line-height:6.8px;color:#555;font-weight:normal;white-space:pre;">ONLYOFF...</div>
<div style="position:absolute;left:264.7px;top:223.05100000000002px;font-size:6.8px;line-height:6.8px;color:#555;font-weight:normal;white-space:pre;">PLAN</div>
<div style="position:absolute;left:351.1px;top:223.05100000000002px;font-size:6.8px;line-height:6.8px;color:#555;font-weight:normal;white-space:pre;">C25</div>
<div style="position:absolute;left:394.8px;top:223.05100000000002px;font-size:6.8px;line-height:6.8px;color:#555;font-weight:normal;white-space:pre;">28%</div>
<div style="position:absolute;left:462.9px;top:223.05100000000002px;font-size:6.8px;line-height:6.8px;color:#555;font-weight:normal;white-space:pre;">=IFERROR(C19/C22-1,&quot;&quot;)</div>
<div style="position:absolute;left:217.2px;top:232.60000000000002px;width:333.2px;height:0.8px;background:#dadada"></div>
<div style="position:absolute;left:221.3px;top:237.70100000000002px;font-size:6.8px;line-height:6.8px;color:#555;font-weight:normal;white-space:pre;">ONLYOFF...</div>
<div style="position:absolute;left:264.7px;top:237.70100000000002px;font-size:6.8px;line-height:6.8px;color:#555;font-weight:normal;white-space:pre;">PLAN</div>
<div style="position:absolute;left:307.7px;top:237.70100000000002px;font-size:6.8px;line-height:6.8px;color:#555;font-weight:normal;white-space:pre;">Total_Sale</div>
<div style="position:absolute;left:351.1px;top:237.70100000000002px;font-size:6.8px;line-height:6.8px;color:#555;font-weight:normal;white-space:pre;">O19</div>
<div style="position:absolute;left:394.8px;top:237.70100000000002px;font-size:6.8px;line-height:6.8px;color:#555;font-weight:normal;white-space:pre;">$ 50,851.00</div>
<div style="position:absolute;left:462.9px;top:237.70100000000002px;font-size:6.8px;line-height:6.8px;color:#555;font-weight:normal;white-space:pre;">=SUM(Sale)</div>
<div style="position:absolute;left:217.2px;top:247.25px;width:333.2px;height:0.8px;background:#dadada"></div>
<div style="position:absolute;left:221.3px;top:252.351px;font-size:6.8px;line-height:6.8px;color:#555;font-weight:normal;white-space:pre;">ONLYOFF...</div>
<div style="position:absolute;left:264.7px;top:252.351px;font-size:6.8px;line-height:6.8px;color:#555;font-weight:normal;white-space:pre;">PLAN</div>
<div style="position:absolute;left:351.1px;top:252.351px;font-size:6.8px;line-height:6.8px;color:#555;font-weight:normal;white-space:pre;">O20</div>
<div style="position:absolute;left:394.8px;top:252.351px;font-size:6.8px;line-height:6.8px;color:#555;font-weight:normal;white-space:pre;">$ 6,417.00</div>
<div style="position:absolute;left:462.9px;top:252.351px;font-size:6.8px;line-height:6.8px;color:#555;font-weight:normal;white-space:pre;">=SUM(C20:N20)</div>
<div style="position:absolute;left:217.2px;top:261.90000000000003px;width:333.2px;height:0.8px;background:#dadada"></div>
<div style="position:absolute;left:221.3px;top:267.00100000000003px;font-size:6.8px;line-height:6.8px;color:#555;font-weight:normal;white-space:pre;">ONLYOFF...</div>
<div style="position:absolute;left:264.7px;top:267.00100000000003px;font-size:6.8px;line-height:6.8px;color:#555;font-weight:normal;white-space:pre;">PLAN</div>
<div style="position:absolute;left:351.1px;top:267.00100000000003px;font-size:6.8px;line-height:6.8px;color:#555;font-weight:normal;white-space:pre;">O22</div>
<div style="position:absolute;left:394.8px;top:267.00100000000003px;font-size:6.8px;line-height:6.8px;color:#555;font-weight:normal;white-space:pre;">$ 38,694.00</div>
<div style="position:absolute;left:462.9px;top:267.00100000000003px;font-size:6.8px;line-height:6.8px;color:#555;font-weight:normal;white-space:pre;">=SUM(C22:N22)</div>
<div style="position:absolute;left:217.2px;top:276.55px;width:333.2px;height:0.8px;background:#dadada"></div>
<div style="position:absolute;left:221.3px;top:281.651px;font-size:6.8px;line-height:6.8px;color:#555;font-weight:normal;white-space:pre;">ONLYOFF...</div>
<div style="position:absolute;left:264.7px;top:281.651px;font-size:6.8px;line-height:6.8px;color:#555;font-weight:normal;white-space:pre;">PLAN</div>
<div style="position:absolute;left:307.7px;top:281.651px;font-size:6.8px;line-height:6.8px;color:#555;font-weight:normal;white-space:pre;">Income</div>
<div style="position:absolute;left:351.1px;top:281.651px;font-size:6.8px;line-height:6.8px;color:#555;font-weight:normal;white-space:pre;">O26</div>
<div style="position:absolute;left:394.8px;top:281.651px;font-size:6.8px;line-height:6.8px;color:#555;font-weight:normal;white-space:pre;">$ 29,294.90</div>
<div style="position:absolute;left:462.9px;top:281.651px;font-size:6.8px;line-height:6.8px;color:#555;font-weight:normal;white-space:pre;">=SUM(Other_income)</div>
<div style="position:absolute;left:358.2px;top:304.4px;width:52.7px;height:13.3px;background:#fff;border:1px solid #cbcbcb;border-radius:1px"></div>
<div style="position:absolute;left:284.6px;width:200px;text-align:center;top:307.26575px;font-size:7.1px;line-height:7.1px;color:#444;font-weight:bold;white-space:pre;">Close</div>
<div style="position:absolute;left:0px;top:421.4px;width:768px;height:16.6px;background:#f7f7f7;border-top:1px solid #dcdcdc"></div>
<svg style="position:absolute;left:10.5px;top:427.2px;" width="6" height="7" viewBox="0 0 6 7"><path d="M5.4 0.3 L0.5 3.2 L5.4 6.1 Z" fill="#9a9a9a"/></svg>
<svg style="position:absolute;left:25.3px;top:427.2px;" width="6" height="7" viewBox="0 0 6 7"><path d="M0.6 0.3 L5.5 3.2 L0.6 6.1 Z" fill="#9a9a9a"/></svg>
<div style="position:absolute;left:42.2px;top:422.4px;width:0.8px;height:15.6px;background:#dcdcdc"></div>
<svg style="position:absolute;left:50.5px;top:427.3px;" width="8" height="7" viewBox="0 0 8 7"><path d="M3.7 0.3 V6.6 M0.4 3.45 H7" stroke="#555" stroke-width="0.8"/></svg>
<svg style="position:absolute;left:64.6px;top:427.3px;" width="7" height="7" viewBox="0 0 7 7"><path d="M0.4 0.8 H6.6 M0.4 2.45 H6.6 M0.4 4.1 H6.6 M0.4 5.75 H6.6" stroke="#666" stroke-width="0.8"/></svg>
<div style="position:absolute;left:79.7px;top:422.8px;width:31.3px;height:15.2px;background:#fff;border-top:2px solid #3b8fa3"></div>
<div style="position:absolute;left:-4.5px;width:200px;text-align:center;top:427.154px;font-size:7.2px;line-height:7.2px;color:#444;font-weight:bold;white-space:pre;">PLAN</div>
<div style="position:absolute;left:111px;top:422.8px;width:35.900000000000006px;height:15.2px;background:#eaeaea;border-top:2px solid #f3b21c;border-right:1px solid #d4d4d4"></div>
<div style="position:absolute;left:28.94999999999999px;width:200px;text-align:center;top:427.1775px;font-size:7px;line-height:7px;color:#666;font-weight:normal;white-space:pre;">Sheet1</div>
<div style="position:absolute;left:146.9px;top:422.8px;width:35.900000000000006px;height:15.2px;background:#eaeaea;border-top:2px solid #c1272d;border-right:1px solid #d4d4d4"></div>
<div style="position:absolute;left:64.85000000000002px;width:200px;text-align:center;top:427.1775px;font-size:7px;line-height:7px;color:#666;font-weight:normal;white-space:pre;">Sheet2</div>
<div style="position:absolute;left:182.8px;top:422.8px;width:35.94999999999999px;height:15.2px;background:#eaeaea;border-top:2px solid #7fb23a;border-right:1px solid #d4d4d4"></div>
<div style="position:absolute;left:100.775px;width:200px;text-align:center;top:427.1775px;font-size:7px;line-height:7px;color:#666;font-weight:normal;white-space:pre;">Sheet3</div>
<div style="position:absolute;left:345.5px;width:200px;text-align:center;top:426.74225px;font-size:7.3px;line-height:7.3px;color:#444;font-weight:normal;white-space:pre;">All changes saved</div>
<div style="position:absolute;left:669px;top:430.4px;width:6.3px;height:0.9px;background:#666"></div>
<div style="position:absolute;left:685.5px;top:426.96575px;font-size:7.1px;line-height:7.1px;color:#444;font-weight:normal;white-space:pre;">Zoom 100%</div>
<svg style="position:absolute;left:734.5px;top:427.2px;" width="7.5" height="7" viewBox="0 0 7.5 7"><path d="M3.6 0.3 V6.6 M0.4 3.45 H6.8" stroke="#555" stroke-width="0.9"/></svg></body></html>
